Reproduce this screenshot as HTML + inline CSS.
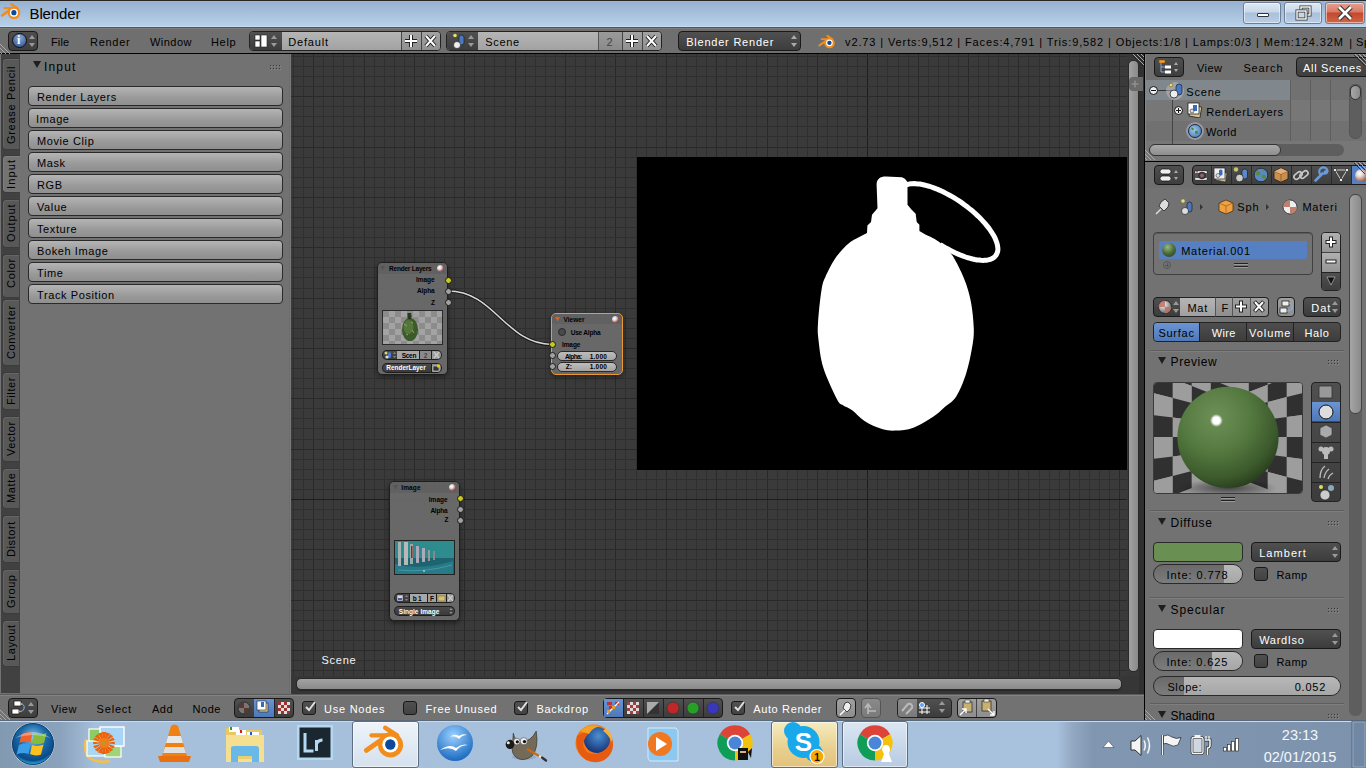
<!DOCTYPE html><html><head><meta charset="utf-8"><style>
*{margin:0;padding:0;box-sizing:border-box}
html,body{width:1366px;height:768px;overflow:hidden;background:#727272}
body{position:relative;font-family:"Liberation Sans",sans-serif;font-size:12px;color:#000}
.a{position:absolute}
.t{position:absolute;white-space:pre;line-height:1}
.btn{position:absolute;border:1px solid #191919;border-radius:4px;background:linear-gradient(#b0b0b0,#969696)}
.dk{position:absolute;border:1px solid #191919;border-radius:4px;background:linear-gradient(#505050,#3c3c3c)}
.chk{position:absolute;width:14px;height:14px;border:1px solid #191919;border-radius:3px;background:linear-gradient(#4c4c4c,#3e3e3e)}
</style></head><body>
<div class="a" style="left:0px;top:0px;width:1366px;height:1px;background:#2a2624"></div>
<div class="a" style="left:0px;top:1px;width:1366px;height:26px;background:linear-gradient(#9ab5d3,#98b3d1 6%,#b9d1ea)"></div>
<div class="a" style="left:0px;top:26px;width:1366px;height:1px;background:#c4dbf2"></div>
<div class="a" style="left:0px;top:27px;width:1366px;height:1px;background:#555"></div>
<div class="a" style="left:0px;top:28px;width:1366px;height:25px;background:#6f6f6f;border-top:1px solid #7c7c7c"></div>
<div class="a" style="left:0px;top:53px;width:1366px;height:1px;background:#000"></div>
<div class="a" style="left:0px;top:54px;width:291px;height:640px;background:#727272"></div>
<div class="a" style="left:1px;top:54px;width:19px;height:639px;background:#414141"></div>
<div class="a" style="left:289px;top:54px;width:1px;height:640px;background:#6b6b6b"></div>
<div class="a" style="left:290px;top:54px;width:1px;height:640px;background:#7b7b7b"></div>
<div class="a" style="left:291px;top:54px;width:853px;height:640px;background:#3a3a3a"></div>
<div class="a" style="left:1144px;top:54px;width:1px;height:666px;background:#000"></div>
<div class="a" style="left:1145px;top:54px;width:221px;height:107px;background:#727272"></div>
<div class="a" style="left:1145px;top:161px;width:221px;height:1px;background:#000"></div>
<div class="a" style="left:1145px;top:162px;width:221px;height:558px;background:#727272"></div>
<div class="a" style="left:0px;top:694px;width:1144px;height:1px;background:#5c5c5c"></div>
<div class="a" style="left:0px;top:695px;width:1144px;height:25px;background:#727272;border-top:1px solid #838383"></div>
<div class="a" style="left:0px;top:720px;width:1366px;height:48px;background:linear-gradient(90deg,#a8c3de 0,#a8c3de 1060px,#7f96b0 1095px,#7f96b0 100%)"></div>
<div class="a" style="left:0px;top:720px;width:1366px;height:1px;background:#dce8f4"></div>
<svg class="a" style="left:291px;top:54px" width="836" height="622" shape-rendering="crispEdges"><rect x="2" y="0" width="1" height="622" fill="#2f2f2f"/><rect x="12" y="0" width="1" height="622" fill="#2f2f2f"/><rect x="22" y="0" width="1" height="622" fill="#292929"/><rect x="32" y="0" width="1" height="622" fill="#2f2f2f"/><rect x="42" y="0" width="1" height="622" fill="#2f2f2f"/><rect x="52" y="0" width="1" height="622" fill="#2f2f2f"/><rect x="62" y="0" width="1" height="622" fill="#2f2f2f"/><rect x="73" y="0" width="1" height="622" fill="#292929"/><rect x="83" y="0" width="1" height="622" fill="#2f2f2f"/><rect x="93" y="0" width="1" height="622" fill="#2f2f2f"/><rect x="103" y="0" width="1" height="622" fill="#2f2f2f"/><rect x="113" y="0" width="1" height="622" fill="#2f2f2f"/><rect x="123" y="0" width="1" height="622" fill="#292929"/><rect x="133" y="0" width="1" height="622" fill="#2f2f2f"/><rect x="143" y="0" width="1" height="622" fill="#2f2f2f"/><rect x="153" y="0" width="1" height="622" fill="#2f2f2f"/><rect x="163" y="0" width="1" height="622" fill="#2f2f2f"/><rect x="173" y="0" width="1" height="622" fill="#292929"/><rect x="183" y="0" width="1" height="622" fill="#2f2f2f"/><rect x="193" y="0" width="1" height="622" fill="#2f2f2f"/><rect x="203" y="0" width="1" height="622" fill="#2f2f2f"/><rect x="214" y="0" width="1" height="622" fill="#2f2f2f"/><rect x="224" y="0" width="1" height="622" fill="#292929"/><rect x="234" y="0" width="1" height="622" fill="#2f2f2f"/><rect x="244" y="0" width="1" height="622" fill="#2f2f2f"/><rect x="254" y="0" width="1" height="622" fill="#2f2f2f"/><rect x="264" y="0" width="1" height="622" fill="#2f2f2f"/><rect x="274" y="0" width="1" height="622" fill="#292929"/><rect x="284" y="0" width="1" height="622" fill="#2f2f2f"/><rect x="294" y="0" width="1" height="622" fill="#2f2f2f"/><rect x="304" y="0" width="1" height="622" fill="#2f2f2f"/><rect x="314" y="0" width="1" height="622" fill="#2f2f2f"/><rect x="324" y="0" width="1" height="622" fill="#292929"/><rect x="334" y="0" width="1" height="622" fill="#2f2f2f"/><rect x="345" y="0" width="1" height="622" fill="#2f2f2f"/><rect x="355" y="0" width="1" height="622" fill="#2f2f2f"/><rect x="365" y="0" width="1" height="622" fill="#2f2f2f"/><rect x="375" y="0" width="1" height="622" fill="#292929"/><rect x="385" y="0" width="1" height="622" fill="#2f2f2f"/><rect x="395" y="0" width="1" height="622" fill="#2f2f2f"/><rect x="405" y="0" width="1" height="622" fill="#2f2f2f"/><rect x="415" y="0" width="1" height="622" fill="#2f2f2f"/><rect x="425" y="0" width="1" height="622" fill="#292929"/><rect x="435" y="0" width="1" height="622" fill="#2f2f2f"/><rect x="445" y="0" width="1" height="622" fill="#2f2f2f"/><rect x="455" y="0" width="1" height="622" fill="#2f2f2f"/><rect x="465" y="0" width="1" height="622" fill="#2f2f2f"/><rect x="476" y="0" width="1" height="622" fill="#292929"/><rect x="486" y="0" width="1" height="622" fill="#2f2f2f"/><rect x="496" y="0" width="1" height="622" fill="#2f2f2f"/><rect x="506" y="0" width="1" height="622" fill="#2f2f2f"/><rect x="516" y="0" width="1" height="622" fill="#2f2f2f"/><rect x="526" y="0" width="1" height="622" fill="#292929"/><rect x="536" y="0" width="1" height="622" fill="#2f2f2f"/><rect x="546" y="0" width="1" height="622" fill="#2f2f2f"/><rect x="556" y="0" width="1" height="622" fill="#2f2f2f"/><rect x="566" y="0" width="1" height="622" fill="#2f2f2f"/><rect x="576" y="0" width="1" height="622" fill="#1d1d1d"/><rect x="586" y="0" width="1" height="622" fill="#2f2f2f"/><rect x="596" y="0" width="1" height="622" fill="#2f2f2f"/><rect x="607" y="0" width="1" height="622" fill="#2f2f2f"/><rect x="617" y="0" width="1" height="622" fill="#2f2f2f"/><rect x="627" y="0" width="1" height="622" fill="#292929"/><rect x="637" y="0" width="1" height="622" fill="#2f2f2f"/><rect x="647" y="0" width="1" height="622" fill="#2f2f2f"/><rect x="657" y="0" width="1" height="622" fill="#2f2f2f"/><rect x="667" y="0" width="1" height="622" fill="#2f2f2f"/><rect x="677" y="0" width="1" height="622" fill="#292929"/><rect x="687" y="0" width="1" height="622" fill="#2f2f2f"/><rect x="697" y="0" width="1" height="622" fill="#2f2f2f"/><rect x="707" y="0" width="1" height="622" fill="#2f2f2f"/><rect x="717" y="0" width="1" height="622" fill="#2f2f2f"/><rect x="727" y="0" width="1" height="622" fill="#292929"/><rect x="737" y="0" width="1" height="622" fill="#2f2f2f"/><rect x="748" y="0" width="1" height="622" fill="#2f2f2f"/><rect x="758" y="0" width="1" height="622" fill="#2f2f2f"/><rect x="768" y="0" width="1" height="622" fill="#2f2f2f"/><rect x="778" y="0" width="1" height="622" fill="#292929"/><rect x="788" y="0" width="1" height="622" fill="#2f2f2f"/><rect x="798" y="0" width="1" height="622" fill="#2f2f2f"/><rect x="808" y="0" width="1" height="622" fill="#2f2f2f"/><rect x="818" y="0" width="1" height="622" fill="#2f2f2f"/><rect x="828" y="0" width="1" height="622" fill="#292929"/><rect x="0" y="2" width="836" height="1" fill="#2f2f2f"/><rect x="0" y="12" width="836" height="1" fill="#2f2f2f"/><rect x="0" y="22" width="836" height="1" fill="#2f2f2f"/><rect x="0" y="32" width="836" height="1" fill="#2f2f2f"/><rect x="0" y="42" width="836" height="1" fill="#292929"/><rect x="0" y="52" width="836" height="1" fill="#2f2f2f"/><rect x="0" y="62" width="836" height="1" fill="#2f2f2f"/><rect x="0" y="72" width="836" height="1" fill="#2f2f2f"/><rect x="0" y="82" width="836" height="1" fill="#2f2f2f"/><rect x="0" y="93" width="836" height="1" fill="#292929"/><rect x="0" y="103" width="836" height="1" fill="#2f2f2f"/><rect x="0" y="113" width="836" height="1" fill="#2f2f2f"/><rect x="0" y="123" width="836" height="1" fill="#2f2f2f"/><rect x="0" y="133" width="836" height="1" fill="#2f2f2f"/><rect x="0" y="143" width="836" height="1" fill="#292929"/><rect x="0" y="153" width="836" height="1" fill="#2f2f2f"/><rect x="0" y="163" width="836" height="1" fill="#2f2f2f"/><rect x="0" y="173" width="836" height="1" fill="#2f2f2f"/><rect x="0" y="183" width="836" height="1" fill="#2f2f2f"/><rect x="0" y="193" width="836" height="1" fill="#292929"/><rect x="0" y="203" width="836" height="1" fill="#2f2f2f"/><rect x="0" y="213" width="836" height="1" fill="#2f2f2f"/><rect x="0" y="223" width="836" height="1" fill="#2f2f2f"/><rect x="0" y="234" width="836" height="1" fill="#2f2f2f"/><rect x="0" y="244" width="836" height="1" fill="#292929"/><rect x="0" y="254" width="836" height="1" fill="#2f2f2f"/><rect x="0" y="264" width="836" height="1" fill="#2f2f2f"/><rect x="0" y="274" width="836" height="1" fill="#2f2f2f"/><rect x="0" y="284" width="836" height="1" fill="#2f2f2f"/><rect x="0" y="294" width="836" height="1" fill="#292929"/><rect x="0" y="304" width="836" height="1" fill="#2f2f2f"/><rect x="0" y="314" width="836" height="1" fill="#2f2f2f"/><rect x="0" y="324" width="836" height="1" fill="#2f2f2f"/><rect x="0" y="334" width="836" height="1" fill="#2f2f2f"/><rect x="0" y="344" width="836" height="1" fill="#292929"/><rect x="0" y="354" width="836" height="1" fill="#2f2f2f"/><rect x="0" y="364" width="836" height="1" fill="#2f2f2f"/><rect x="0" y="374" width="836" height="1" fill="#2f2f2f"/><rect x="0" y="385" width="836" height="1" fill="#2f2f2f"/><rect x="0" y="395" width="836" height="1" fill="#292929"/><rect x="0" y="405" width="836" height="1" fill="#2f2f2f"/><rect x="0" y="415" width="836" height="1" fill="#2f2f2f"/><rect x="0" y="425" width="836" height="1" fill="#2f2f2f"/><rect x="0" y="435" width="836" height="1" fill="#2f2f2f"/><rect x="0" y="445" width="836" height="1" fill="#1d1d1d"/><rect x="0" y="455" width="836" height="1" fill="#2f2f2f"/><rect x="0" y="465" width="836" height="1" fill="#2f2f2f"/><rect x="0" y="475" width="836" height="1" fill="#2f2f2f"/><rect x="0" y="485" width="836" height="1" fill="#2f2f2f"/><rect x="0" y="495" width="836" height="1" fill="#292929"/><rect x="0" y="505" width="836" height="1" fill="#2f2f2f"/><rect x="0" y="515" width="836" height="1" fill="#2f2f2f"/><rect x="0" y="526" width="836" height="1" fill="#2f2f2f"/><rect x="0" y="536" width="836" height="1" fill="#2f2f2f"/><rect x="0" y="546" width="836" height="1" fill="#292929"/><rect x="0" y="556" width="836" height="1" fill="#2f2f2f"/><rect x="0" y="566" width="836" height="1" fill="#2f2f2f"/><rect x="0" y="576" width="836" height="1" fill="#2f2f2f"/><rect x="0" y="586" width="836" height="1" fill="#2f2f2f"/><rect x="0" y="596" width="836" height="1" fill="#292929"/><rect x="0" y="606" width="836" height="1" fill="#2f2f2f"/><rect x="0" y="616" width="836" height="1" fill="#2f2f2f"/></svg>
<div class="a" style="left:637px;top:157px;width:490px;height:313px;background:#000"></div>
<svg class="a" style="left:0;top:0" width="1366" height="768"><g><path d="M944.0,245.7 C945.5,247.5 949.8,251.1 953.1,256.6 C956.4,262.1 961.0,271.0 964.0,278.5 C967.0,286.0 969.3,293.3 970.9,301.7 C972.5,310.1 973.6,321.2 973.8,329.0 C974.0,336.8 973.2,341.1 971.9,348.6 C970.6,356.1 968.6,366.0 966.0,374.0 C963.4,382.0 959.8,390.9 956.2,396.4 C952.7,401.9 948.4,403.8 944.5,407.2 C940.6,410.6 938.0,413.6 932.8,417.0 C927.6,420.4 919.5,425.4 913.3,427.7 C907.1,430.0 900.9,430.4 895.7,430.6 C890.5,430.8 887.2,430.6 882.0,429.0 C876.8,427.4 869.5,424.1 864.5,420.9 C859.5,417.7 855.4,412.6 851.8,410.0 C848.2,407.4 845.5,407.0 843.0,405.2 C840.5,403.4 840.4,405.6 837.1,399.4 C833.8,393.2 826.5,377.8 823.4,368.0 C820.3,358.2 819.5,348.3 818.6,340.8 C817.7,333.3 817.5,331.7 818.0,323.2 C818.5,314.7 820.2,297.8 821.5,290.0 C822.8,282.2 823.0,282.3 825.5,276.7 C828.0,271.1 832.5,262.2 836.5,256.6 C840.5,251.0 845.2,246.3 849.2,243.0 C853.2,239.7 858.4,237.7 860.2,236.6 L867,232.9 L867.4,225.6 L871,222 L872,214.7 L877.5,208.3 L876.6,184.6 C876.6,179 880,176.4 886,176.4 L902,177.3 Q905,178 907.5,181.9 L907.5,204.7 L911.2,209.2 L915.7,213.8 L916.7,222 L919.4,224.7 L919.4,231 L925.8,234.7 Q935,238 944,245.7 Z" fill="#fff"/><path d="M904.8,185.5 L906.1,184.9 L907.4,184.5 L908.9,184.1 L910.5,183.8 L912.2,183.7 L914.0,183.6 L915.9,183.7 L917.9,183.9 L920.0,184.1 L922.1,184.5 L924.4,185.0 L926.6,185.6 L929.0,186.2 L931.4,187.0 L933.8,187.9 L936.3,188.8 L938.8,189.9 L941.4,191.0 L944.0,192.3 L946.5,193.6 L949.1,195.0 L951.7,196.4 L954.3,197.9 L956.8,199.5 L959.4,201.2 L961.9,202.9 L964.3,204.7 L966.8,206.5 L969.1,208.4 L971.5,210.2 L973.7,212.2 L975.9,214.1 L978.0,216.1 L980.0,218.1 L982.0,220.1 L983.8,222.1 L985.6,224.1 L987.2,226.1 L988.8,228.1 L990.2,230.1 L991.5,232.0 L992.7,234.0 L993.8,235.8 L994.8,237.7 L995.6,239.5 L996.3,241.3 L996.9,243.0 L997.3,244.6 L997.6,246.2 L997.8,247.7 L997.9,249.2 L997.8,250.6 L997.5,251.9 L997.1,253.1 L996.6,254.2 L996.0,255.3 L995.2,256.2 L994.4,257.1 L993.3,257.8 L992.2,258.5 L990.9,259.1 L989.6,259.5 L988.1,259.9 L986.5,260.2 L984.8,260.3 L983.0,260.4 L981.1,260.3 L979.1,260.1 L977.0,259.9 L974.9,259.5 L972.6,259.0 L970.4,258.4 L968.0,257.8 L965.6,257.0 L963.2,256.1 L960.7,255.2 L958.2,254.1 L955.6,253.0 L953.0,251.7 L950.5,250.4 L947.9,249.0 L945.3,247.6 L942.7,246.1 L940.2,244.5" fill="none" stroke="#fff" stroke-width="5"/></g></svg>
<div class="a" style="left:1127px;top:54px;width:17px;height:640px;background:#383838"></div>
<div class="a" style="left:291px;top:676px;width:853px;height:18px;background:#363636"></div>
<div class="a" style="left:1139px;top:54px;width:5px;height:640px;background:#303030"></div>
<div class="a" style="left:1128px;top:60px;width:11px;height:612px;border-radius:5px;background:linear-gradient(90deg,#a2a2a2,#8a8a8a);border:1px solid #2a2a2a"></div>
<div class="a" style="left:1129px;top:77px;width:14px;height:14px;background:#6a6a6a;border-radius:4px 0 0 4px"></div>
<svg class="a" style="left:1131px;top:80px" width="8" height="8"><path d="M4,0.5 V7.5 M0.5,4 H7.5" stroke="#8e8e8e" stroke-width="1.6"/></svg>
<div class="a" style="left:296px;top:678px;width:826px;height:12px;border-radius:5px;background:linear-gradient(#a2a2a2,#8a8a8a);border:1px solid #2a2a2a;box-shadow:0 1px 1px rgba(0,0,0,0.3)"></div>
<div class="t" style="left:321.50px;top:654.69px;font-size:11px;letter-spacing:0.732px;color:#f4f4f4">Scene</div>
<svg class="a" style="left:0;top:0" width="1366" height="768"><path d="M448,291 C495,291 505,344 552,344.5" fill="none" stroke="#1a1a1a" stroke-width="3.4"/><path d="M448,291 C495,291 505,344 552,344.5" fill="none" stroke="#d8d8d8" stroke-width="1.5"/></svg>
<div class="a" style="left:377px;top:262px;width:71px;height:113px;border-radius:5px;background:rgba(108,108,108,0.92);border:1px solid #1e1e1e;box-shadow:0 2px 5px rgba(0,0,0,0.45)"></div>
<div class="a" style="left:378px;top:263px;width:69px;height:11px;border-radius:4px 4px 0 0;background:rgba(90,90,90,0.5)"></div>
<svg class="a" style="left:380px;top:266px" width="6" height="5"><path d="M0,0 L5,0 L2.5,4.5Z" fill="#555"/></svg>
<div class="t" style="left:389.00px;top:265.80px;font-size:6.5px;letter-spacing:-0.212px;font-weight:bold;color:#000">Render Layers</div>
<div class="a" style="left:436.5px;top:264.5px;width:7.0px;height:7.0px;border-radius:50%;background:radial-gradient(circle at 35% 35%,#fff 0,#ddd 30%,#a06060 60%,#333 100%)"></div>
<div class="t" style="left:415.90px;top:276.80px;font-size:6.5px;letter-spacing:0.007px;font-weight:bold;color:#000">Image</div>
<div class="t" style="left:417.00px;top:288.20px;font-size:6.5px;letter-spacing:-0.110px;font-weight:bold;color:#000">Alpha</div>
<div class="t" style="left:431.00px;top:299.50px;font-size:6.5px;letter-spacing:0.000px;font-weight:bold;color:#000">Z</div>
<div class="a" style="left:444.5px;top:276.5px;width:7px;height:7px;border-radius:50%;background:#c7c729;border:1px solid #1a1a1a"></div>
<div class="a" style="left:444.5px;top:287.5px;width:7px;height:7px;border-radius:50%;background:#a1a1a1;border:1px solid #1a1a1a"></div>
<div class="a" style="left:444.5px;top:298.5px;width:7px;height:7px;border-radius:50%;background:#a1a1a1;border:1px solid #1a1a1a"></div>
<div class="a" style="left:382px;top:310px;width:61px;height:35px;border:1px solid #2a2a2a;background-color:#8c8c8c;background-image:linear-gradient(45deg,#a3a3a3 25%,transparent 25%,transparent 75%,#a3a3a3 75%),linear-gradient(45deg,#a3a3a3 25%,transparent 25%,transparent 75%,#a3a3a3 75%);background-size:12px 12px;background-position:0 0,6px 6px"></div>
<svg class="a" style="left:382px;top:310px" width="61" height="35"><ellipse cx="28" cy="19.5" rx="8" ry="11.5" fill="#3c5a2a"/><ellipse cx="26.5" cy="17" rx="5" ry="7" fill="#5a7d40" opacity="0.8"/><path d="M22,14 l3,2 M30,20 l2,3 M24,24 l2,1 M29,12 l2,1" stroke="#9ab870" stroke-width="0.8"/><rect x="25.5" y="3" width="4" height="6" fill="#2a3a22"/><path d="M29,4 Q37,4 37,11" stroke="#999" stroke-width="1" fill="none"/></svg>
<div class="a" style="left:382px;top:350px;width:60px;height:10px;background:#1e1e1e;border-radius:5px"></div>
<div class="a" style="left:383px;top:351px;width:14px;height:8px;background:linear-gradient(#4a4a4a,#3a3a3a);border-radius:4px 0 0 4px"></div>
<div class="a" style="left:397px;top:351px;width:22px;height:8px;background:#a8a8a8;border-radius:0"></div>
<div class="a" style="left:420px;top:351px;width:11px;height:8px;background:#8a8a8a;border-radius:0"></div>
<div class="a" style="left:432px;top:351px;width:9px;height:8px;background:#9a9a9a;border-radius:0 4px 4px 0"></div>
<svg class="a" style="left:383px;top:351px" width="14" height="8"><circle cx="3" cy="2" r="1.5" fill="#d8d870"/><rect x="5" y="1" width="3" height="6" rx="1.5" fill="#4a7ad0"/><circle cx="4" cy="6" r="1.6" fill="#ddd"/><path d="M10,3 L11.5,1 L13,3Z M10,5 L11.5,7 L13,5Z" fill="#888"/></svg>
<svg class="a" style="left:432px;top:351px" width="9" height="8"><path d="M2,1 L7,7 M7,1 L2,7" stroke="#ccc" stroke-width="1.3"/></svg>
<div class="t" style="left:401.70px;top:352.90px;font-size:6.5px;letter-spacing:-0.288px;font-weight:bold;color:#000">Scen</div>
<div class="t" style="left:423.70px;top:352.90px;font-size:6.5px;letter-spacing:0.000px;font-weight:bold;color:#444">2</div>
<div class="a" style="left:382px;top:363px;width:60px;height:10px;background:#1e1e1e;border-radius:5px"></div>
<div class="a" style="left:383px;top:364px;width:48px;height:8px;background:linear-gradient(#4a4a4a,#3a3a3a);border-radius:4px 0 0 4px"></div>
<div class="a" style="left:432px;top:364px;width:9px;height:8px;background:#8a8a8a;border-radius:0 4px 4px 0"></div>
<svg class="a" style="left:432px;top:364px" width="9" height="8"><rect x="1" y="2" width="6" height="5" fill="#333" stroke="#ddd" stroke-width="0.6"/><circle cx="6.5" cy="2" r="1.8" fill="#e8c820"/></svg>
<div class="t" style="left:386.30px;top:365.40px;font-size:6.5px;letter-spacing:-0.031px;font-weight:bold;color:#fff">RenderLayer</div>
<div class="a" style="left:551px;top:313px;width:72px;height:62px;border-radius:5px;background:rgba(108,108,108,0.92);border:1px solid #ea9a30;box-shadow:0 2px 5px rgba(0,0,0,0.45)"></div>
<div class="a" style="left:552px;top:314px;width:70px;height:10px;border-radius:4px 4px 0 0;background:rgba(90,90,90,0.5)"></div>
<svg class="a" style="left:555px;top:317px" width="6" height="5"><path d="M0,0 L5,0 L2.5,4.5Z" fill="#e06020"/></svg>
<div class="t" style="left:563.40px;top:317.40px;font-size:6.5px;letter-spacing:0.058px;font-weight:bold;color:#000">Viewer</div>
<div class="a" style="left:611.5px;top:315.5px;width:7.0px;height:7.0px;border-radius:50%;background:radial-gradient(circle at 35% 35%,#fff 0,#ddd 30%,#a06060 60%,#333 100%)"></div>
<div class="a" style="left:558px;top:328px;width:8px;height:8px;border-radius:50%;background:#4a4a4a;border:1px solid #2a2a2a"></div>
<div class="t" style="left:570.70px;top:329.50px;font-size:6.5px;letter-spacing:-0.209px;font-weight:bold;color:#000">Use Alpha</div>
<div class="t" style="left:561.90px;top:342.40px;font-size:6.5px;letter-spacing:-0.068px;font-weight:bold;color:#000">Image</div>
<div class="a" style="left:548.5px;top:341.0px;width:7px;height:7px;border-radius:50%;background:#c7c729;border:1px solid #1a1a1a"></div>
<div class="a" style="left:557px;top:351px;width:60px;height:10px;border-radius:5px;background:linear-gradient(#bdbdbd,#a4a4a4);border:1px solid #2a2a2a"></div>
<div class="a" style="left:557px;top:362px;width:60px;height:10px;border-radius:5px;background:linear-gradient(#bdbdbd,#a4a4a4);border:1px solid #2a2a2a"></div>
<div class="t" style="left:565.00px;top:353.50px;font-size:6.5px;letter-spacing:-0.611px;font-weight:bold;color:#000">Alpha:</div>
<div class="t" style="left:589.80px;top:353.50px;font-size:6.5px;letter-spacing:0.187px;font-weight:bold;color:#000">1.000</div>
<div class="t" style="left:565.80px;top:364.30px;font-size:6.5px;letter-spacing:0.030px;font-weight:bold;color:#000">Z:</div>
<div class="t" style="left:589.80px;top:364.30px;font-size:6.5px;letter-spacing:0.187px;font-weight:bold;color:#000">1.000</div>
<div class="a" style="left:548.5px;top:352.0px;width:7px;height:7px;border-radius:50%;background:#a1a1a1;border:1px solid #1a1a1a"></div>
<div class="a" style="left:548.5px;top:363.0px;width:7px;height:7px;border-radius:50%;background:#a1a1a1;border:1px solid #1a1a1a"></div>
<div class="a" style="left:389px;top:481px;width:71px;height:140px;border-radius:5px;background:rgba(108,108,108,0.92);border:1px solid #1e1e1e;box-shadow:0 2px 5px rgba(0,0,0,0.45)"></div>
<div class="a" style="left:390px;top:482px;width:69px;height:11px;border-radius:4px 4px 0 0;background:rgba(90,90,90,0.5)"></div>
<svg class="a" style="left:393px;top:485px" width="6" height="5"><path d="M0,0 L5,0 L2.5,4.5Z" fill="#555"/></svg>
<div class="t" style="left:401.25px;top:484.70px;font-size:6.5px;letter-spacing:0.132px;font-weight:bold;color:#000">Image</div>
<div class="a" style="left:448.5px;top:483.5px;width:7.0px;height:7.0px;border-radius:50%;background:radial-gradient(circle at 35% 35%,#fff 0,#ddd 30%,#a06060 60%,#333 100%)"></div>
<div class="t" style="left:428.75px;top:496.80px;font-size:6.5px;letter-spacing:0.032px;font-weight:bold;color:#000">Image</div>
<div class="t" style="left:430.40px;top:507.60px;font-size:6.5px;letter-spacing:-0.210px;font-weight:bold;color:#000">Alpha</div>
<div class="t" style="left:444.50px;top:516.50px;font-size:6.5px;letter-spacing:0.000px;font-weight:bold;color:#000">Z</div>
<div class="a" style="left:456.5px;top:495.0px;width:7px;height:7px;border-radius:50%;background:#c7c729;border:1px solid #1a1a1a"></div>
<div class="a" style="left:456.5px;top:505.5px;width:7px;height:7px;border-radius:50%;background:#a1a1a1;border:1px solid #1a1a1a"></div>
<div class="a" style="left:456.5px;top:516.5px;width:7px;height:7px;border-radius:50%;background:#a1a1a1;border:1px solid #1a1a1a"></div>
<svg class="a" style="left:394px;top:540px" width="61" height="35"><rect x="0" y="0" width="61" height="35" fill="#1f2a2a"/><rect x="1" y="1" width="59" height="17" fill="#2f8c8e"/><rect x="1" y="18" width="59" height="16" fill="#1d6470"/><path d="M1,24 Q25,31 59,21 L59,34 L1,34Z" fill="#277a86"/><path d="M4,30 Q30,33 58,25" stroke="#4aa0b0" stroke-width="0.8" fill="none"/><rect x="4" y="2" width="3" height="24" fill="#a8b0b0"/><rect x="10" y="2" width="4" height="23" fill="#b8b8b8"/><rect x="16" y="4" width="3" height="20" fill="#9aa"/><rect x="17" y="6" width="1.5" height="12" fill="#a02020"/><rect x="22" y="6" width="3" height="17" fill="#aab"/><rect x="28" y="8" width="3" height="14" fill="#aab"/><rect x="34" y="10" width="2" height="11" fill="#999"/><rect x="39" y="11" width="2" height="9" fill="#888"/><circle cx="30" cy="31" r="0.8" fill="#fff"/></svg>
<div class="a" style="left:394px;top:540px;width:61px;height:35px;border:1px solid #222"></div>
<div class="a" style="left:394px;top:593px;width:61px;height:10px;background:#1e1e1e;border-radius:5px"></div>
<div class="a" style="left:395px;top:594px;width:14px;height:8px;background:linear-gradient(#4a4a4a,#3a3a3a);border-radius:4px 0 0 4px"></div>
<div class="a" style="left:410px;top:594px;width:17px;height:8px;background:#a8a8a8;border-radius:0"></div>
<div class="a" style="left:428px;top:594px;width:8px;height:8px;background:#a0a0a0;border-radius:0"></div>
<div class="a" style="left:437px;top:594px;width:9px;height:8px;background:#a8a890;border-radius:0"></div>
<div class="a" style="left:447px;top:594px;width:7px;height:8px;background:#9a9a9a;border-radius:0 4px 4px 0"></div>
<svg class="a" style="left:395px;top:594px" width="14" height="8"><rect x="2" y="1" width="6" height="6" fill="#e0d0d8" stroke="#333" stroke-width="0.5"/><rect x="3" y="4" width="4" height="2" fill="#3060c0"/><path d="M10,3 L11.5,1 L13,3Z M10,5 L11.5,7 L13,5Z" fill="#888"/></svg>
<svg class="a" style="left:437px;top:594px" width="18" height="8"><rect x="1" y="2" width="7" height="5" fill="#d8c070" stroke="#555" stroke-width="0.5"/><path d="M11,1 L16,7 M16,1 L11,7" stroke="#ccc" stroke-width="1.2"/></svg>
<div class="t" style="left:412.70px;top:596.20px;font-size:6.5px;letter-spacing:-0.238px;font-weight:bold;color:#000">b 1</div>
<div class="t" style="left:430.00px;top:596.20px;font-size:6.5px;letter-spacing:0.000px;font-weight:bold;color:#000">F</div>
<div class="a" style="left:394px;top:606px;width:61px;height:10px;background:#1e1e1e;border-radius:5px"></div>
<div class="a" style="left:395px;top:607px;width:59px;height:8px;background:linear-gradient(#4a4a4a,#3a3a3a);border-radius:4px"></div>
<svg class="a" style="left:449px;top:607px" width="5" height="8"><path d="M0.5,3 L2,1 L3.5,3Z M0.5,5 L2,7 L3.5,5Z" fill="#999"/></svg>
<div class="t" style="left:398.75px;top:608.90px;font-size:6.5px;letter-spacing:0.047px;font-weight:bold;color:#fff">Single Image</div>
<div class="a" style="left:2px;top:58px;width:17px;height:92px;border-radius:4px 0 0 4px;background:#585858;border:1px solid #3c3c3c;border-right:none;box-shadow:inset 1px 1px 0 rgba(255,255,255,0.08)"></div>
<div class="t" style="left:6.29px;top:143.75px;transform-origin:0 0;transform:rotate(-90deg);font-size:11px;letter-spacing:0.696px;">Grease Pencil</div>
<div class="a" style="left:2px;top:155px;width:18px;height:38px;border-radius:4px 0 0 4px;background:#737373;border:1px solid #3c3c3c;border-right:none;box-shadow:inset 1px 1px 0 rgba(255,255,255,0.08)"></div>
<div class="t" style="left:6.29px;top:189.00px;transform-origin:0 0;transform:rotate(-90deg);font-size:11px;letter-spacing:1.148px;">Input</div>
<div class="a" style="left:2px;top:199px;width:17px;height:49px;border-radius:4px 0 0 4px;background:#585858;border:1px solid #3c3c3c;border-right:none;box-shadow:inset 1px 1px 0 rgba(255,255,255,0.08)"></div>
<div class="t" style="left:6.29px;top:242.00px;transform-origin:0 0;transform:rotate(-90deg);font-size:11px;letter-spacing:0.907px;">Output</div>
<div class="a" style="left:2px;top:254px;width:17px;height:44px;border-radius:4px 0 0 4px;background:#585858;border:1px solid #3c3c3c;border-right:none;box-shadow:inset 1px 1px 0 rgba(255,255,255,0.08)"></div>
<div class="t" style="left:6.29px;top:288.30px;transform-origin:0 0;transform:rotate(-90deg);font-size:11px;letter-spacing:0.744px;">Color</div>
<div class="a" style="left:2px;top:299px;width:17px;height:67px;border-radius:4px 0 0 4px;background:#585858;border:1px solid #3c3c3c;border-right:none;box-shadow:inset 1px 1px 0 rgba(255,255,255,0.08)"></div>
<div class="t" style="left:6.29px;top:359.22px;transform-origin:0 0;transform:rotate(-90deg);font-size:11px;letter-spacing:0.600px;">Converter</div>
<div class="a" style="left:2px;top:372px;width:17px;height:38px;border-radius:4px 0 0 4px;background:#585858;border:1px solid #3c3c3c;border-right:none;box-shadow:inset 1px 1px 0 rgba(255,255,255,0.08)"></div>
<div class="t" style="left:6.29px;top:404.89px;transform-origin:0 0;transform:rotate(-90deg);font-size:11px;letter-spacing:0.600px;">Filter</div>
<div class="a" style="left:2px;top:416px;width:17px;height:46px;border-radius:4px 0 0 4px;background:#585858;border:1px solid #3c3c3c;border-right:none;box-shadow:inset 1px 1px 0 rgba(255,255,255,0.08)"></div>
<div class="t" style="left:6.29px;top:456.26px;transform-origin:0 0;transform:rotate(-90deg);font-size:11px;letter-spacing:0.600px;">Vector</div>
<div class="a" style="left:2px;top:468px;width:17px;height:41px;border-radius:4px 0 0 4px;background:#585858;border:1px solid #3c3c3c;border-right:none;box-shadow:inset 1px 1px 0 rgba(255,255,255,0.08)"></div>
<div class="t" style="left:6.29px;top:503.40px;transform-origin:0 0;transform:rotate(-90deg);font-size:11px;letter-spacing:0.600px;">Matte</div>
<div class="a" style="left:2px;top:515px;width:17px;height:48px;border-radius:4px 0 0 4px;background:#585858;border:1px solid #3c3c3c;border-right:none;box-shadow:inset 1px 1px 0 rgba(255,255,255,0.08)"></div>
<div class="t" style="left:6.29px;top:556.66px;transform-origin:0 0;transform:rotate(-90deg);font-size:11px;letter-spacing:0.600px;">Distort</div>
<div class="a" style="left:2px;top:569px;width:17px;height:45px;border-radius:4px 0 0 4px;background:#585858;border:1px solid #3c3c3c;border-right:none;box-shadow:inset 1px 1px 0 rgba(255,255,255,0.08)"></div>
<div class="t" style="left:6.29px;top:607.93px;transform-origin:0 0;transform:rotate(-90deg);font-size:11px;letter-spacing:0.600px;">Group</div>
<div class="a" style="left:2px;top:620px;width:17px;height:47px;border-radius:4px 0 0 4px;background:#585858;border:1px solid #3c3c3c;border-right:none;box-shadow:inset 1px 1px 0 rgba(255,255,255,0.08)"></div>
<div class="t" style="left:6.29px;top:661.49px;transform-origin:0 0;transform:rotate(-90deg);font-size:11px;letter-spacing:0.600px;">Layout</div>
<svg class="a" style="left:33px;top:61px" width="9" height="8"><path d="M0,0 L8,0 L4,7Z" fill="#1e1e1e"/></svg>
<div class="t" style="left:44.00px;top:60.84px;font-size:12px;letter-spacing:1.161px;">Input</div>
<svg class="a" style="left:270px;top:65px" width="12" height="6" shape-rendering="crispEdges"><rect x="0" y="0" width="1" height="1" fill="#3a3a3a"/><rect x="1" y="1" width="1" height="1" fill="#8a8a8a"/><rect x="3" y="0" width="1" height="1" fill="#3a3a3a"/><rect x="4" y="1" width="1" height="1" fill="#8a8a8a"/><rect x="6" y="0" width="1" height="1" fill="#3a3a3a"/><rect x="7" y="1" width="1" height="1" fill="#8a8a8a"/><rect x="9" y="0" width="1" height="1" fill="#3a3a3a"/><rect x="10" y="1" width="1" height="1" fill="#8a8a8a"/><rect x="0" y="3" width="1" height="1" fill="#3a3a3a"/><rect x="1" y="4" width="1" height="1" fill="#8a8a8a"/><rect x="3" y="3" width="1" height="1" fill="#3a3a3a"/><rect x="4" y="4" width="1" height="1" fill="#8a8a8a"/><rect x="6" y="3" width="1" height="1" fill="#3a3a3a"/><rect x="7" y="4" width="1" height="1" fill="#8a8a8a"/><rect x="9" y="3" width="1" height="1" fill="#3a3a3a"/><rect x="10" y="4" width="1" height="1" fill="#8a8a8a"/></svg>
<div class="btn" style="left:28px;top:86px;width:255px;height:20px;border-color:#2a2a2a;background:linear-gradient(#b4b4b4,#999 60%,#8f8f8f)"></div>
<div class="t" style="left:37.00px;top:91.69px;font-size:11px;letter-spacing:0.600px;">Render Layers</div>
<div class="btn" style="left:28px;top:108px;width:255px;height:20px;border-color:#2a2a2a;background:linear-gradient(#b4b4b4,#999 60%,#8f8f8f)"></div>
<div class="t" style="left:36.00px;top:113.69px;font-size:11px;letter-spacing:0.600px;">Image</div>
<div class="btn" style="left:28px;top:130px;width:255px;height:20px;border-color:#2a2a2a;background:linear-gradient(#b4b4b4,#999 60%,#8f8f8f)"></div>
<div class="t" style="left:37.00px;top:135.69px;font-size:11px;letter-spacing:0.600px;">Movie Clip</div>
<div class="btn" style="left:28px;top:152px;width:255px;height:20px;border-color:#2a2a2a;background:linear-gradient(#b4b4b4,#999 60%,#8f8f8f)"></div>
<div class="t" style="left:37.00px;top:157.69px;font-size:11px;letter-spacing:0.600px;">Mask</div>
<div class="btn" style="left:28px;top:174px;width:255px;height:20px;border-color:#2a2a2a;background:linear-gradient(#b4b4b4,#999 60%,#8f8f8f)"></div>
<div class="t" style="left:37.00px;top:179.69px;font-size:11px;letter-spacing:0.600px;">RGB</div>
<div class="btn" style="left:28px;top:196px;width:255px;height:20px;border-color:#2a2a2a;background:linear-gradient(#b4b4b4,#999 60%,#8f8f8f)"></div>
<div class="t" style="left:37.00px;top:201.69px;font-size:11px;letter-spacing:0.600px;">Value</div>
<div class="btn" style="left:28px;top:218px;width:255px;height:20px;border-color:#2a2a2a;background:linear-gradient(#b4b4b4,#999 60%,#8f8f8f)"></div>
<div class="t" style="left:37.00px;top:223.69px;font-size:11px;letter-spacing:0.600px;">Texture</div>
<div class="btn" style="left:28px;top:240px;width:255px;height:20px;border-color:#2a2a2a;background:linear-gradient(#b4b4b4,#999 60%,#8f8f8f)"></div>
<div class="t" style="left:37.00px;top:245.69px;font-size:11px;letter-spacing:0.600px;">Bokeh Image</div>
<div class="btn" style="left:28px;top:262px;width:255px;height:20px;border-color:#2a2a2a;background:linear-gradient(#b4b4b4,#999 60%,#8f8f8f)"></div>
<div class="t" style="left:37.00px;top:267.69px;font-size:11px;letter-spacing:0.600px;">Time</div>
<div class="btn" style="left:28px;top:284px;width:255px;height:20px;border-color:#2a2a2a;background:linear-gradient(#b4b4b4,#999 60%,#8f8f8f)"></div>
<div class="t" style="left:37.00px;top:289.69px;font-size:11px;letter-spacing:0.600px;">Track Position</div>
<div class="a" style="left:1145px;top:54px;width:221px;height:26px;background:#6f6f6f"></div>
<div class="dk" style="left:1154px;top:57px;width:30px;height:20px;background:linear-gradient(#4e4e4e,#3e3e3e)"></div>
<svg class="a" style="left:1157px;top:59px" width="24" height="16"><rect x="2" y="1" width="6" height="3" fill="#f0a030" stroke="#804000" stroke-width="0.5"/><path d="M4,4 V13 M4,8 H8 M4,13 H8" stroke="#8aa8d8" stroke-width="1" fill="none"/><rect x="8" y="6.5" width="6" height="3" fill="#fff"/><rect x="8" y="11.5" width="6" height="3" fill="#fff"/><path d="M17,6 L19,3 L21,6Z M17,10 L19,13 L21,10Z" fill="#aaa"/></svg>
<div class="t" style="left:1197.00px;top:62.69px;font-size:11px;letter-spacing:0.433px;">View</div>
<div class="t" style="left:1243.40px;top:62.69px;font-size:11px;letter-spacing:0.853px;">Search</div>
<div class="dk" style="left:1296px;top:57px;width:80px;height:20px;background:linear-gradient(#4e4e4e,#3e3e3e)"></div>
<div class="t" style="left:1303.00px;top:62.69px;font-size:11px;letter-spacing:0.692px;color:#fff">All Scenes</div>
<div class="a" style="left:1145px;top:80px;width:221px;height:20px;background:#717171"></div>
<div class="a" style="left:1145px;top:80px;width:145px;height:20px;background:#80878d"></div>
<div class="a" style="left:1145px;top:100px;width:221px;height:21px;background:#777777"></div>
<div class="a" style="left:1145px;top:121px;width:221px;height:20px;background:#717171"></div>
<div class="a" style="left:1145px;top:141px;width:221px;height:20px;background:#777777"></div>
<div class="a" style="left:1145px;top:54px;width:1px;height:107px;background:#858585"></div>
<div class="a" style="left:1290px;top:80px;width:1px;height:61px;background:#5e5e5e"></div>
<div class="a" style="left:1310px;top:80px;width:1px;height:61px;background:#5e5e5e"></div>
<div class="a" style="left:1330px;top:80px;width:1px;height:61px;background:#5e5e5e"></div>
<div class="a" style="left:1158px;top:90px;width:14px;height:1px;background:#333"></div>
<div class="a" style="left:1172px;top:100px;width:1px;height:44px;background:#444"></div>
<div class="a" style="left:1149px;top:86px;width:9px;height:9px;border-radius:50%;background:#eee;border:1px solid #111"></div>
<div class="a" style="left:1151px;top:90px;width:5px;height:1px;background:#111"></div>
<div class="a" style="left:1166px;top:82px;width:18px;height:18px;border-radius:50%;background:rgba(200,200,200,0.45)"></div>
<svg class="a" style="left:1167px;top:82px" width="20" height="18"><circle cx="4" cy="3" r="1.8" fill="#e8e070" stroke="#806020" stroke-width="0.6"/><rect x="9" y="2" width="6" height="11" rx="3" fill="#4a78c0" stroke="#1a2a50" stroke-width="0.8"/><circle cx="7" cy="12" r="4" fill="#eee" stroke="#222" stroke-width="0.8"/></svg>
<div class="t" style="left:1186.30px;top:86.69px;font-size:11px;letter-spacing:0.807px;">Scene</div>
<div class="a" style="left:1174px;top:106px;width:9px;height:9px;border-radius:50%;background:#eee;border:1px solid #111"></div>
<div class="a" style="left:1176px;top:110px;width:5px;height:1px;background:#111"></div>
<div class="a" style="left:1178px;top:108px;width:1px;height:5px;background:#111"></div>
<svg class="a" style="left:1187px;top:102px" width="16" height="16"><rect x="3" y="4" width="11" height="11" fill="#d8c898" stroke="#222" stroke-width="0.8" transform="rotate(10 8 9)"/><rect x="1" y="1" width="11" height="11" fill="#fff" stroke="#222" stroke-width="0.8"/><rect x="6" y="3" width="4" height="6" fill="#3a6ac0"/><circle cx="5" cy="9" r="2" fill="#ddd" stroke="#222" stroke-width="0.6"/></svg>
<div class="t" style="left:1206.20px;top:106.69px;font-size:11px;letter-spacing:0.710px;">RenderLayers</div>
<div class="a" style="left:1186px;top:122px;width:18px;height:18px;border-radius:50%;background:rgba(190,190,220,0.5)"></div>
<div class="a" style="left:1188px;top:124px;width:14px;height:14px;border-radius:50%;background:radial-gradient(circle at 40% 40%,#9ec8e8,#3a70a8);border:1px solid #1a2a40"></div>
<svg class="a" style="left:1189px;top:125px" width="12" height="12"><path d="M2,3 Q4,2 5,4 Q4,6 3,5Z M6,6 Q9,5 9,8 Q7,10 6,8Z" fill="#4a8a3a"/></svg>
<div class="t" style="left:1205.90px;top:126.69px;font-size:11px;letter-spacing:0.498px;">World</div>
<div class="a" style="left:1349px;top:84px;width:13px;height:55px;border-radius:6px;background:#5e5e5e;border:1px solid #555"></div>
<div class="a" style="left:1350px;top:85px;width:11px;height:15px;border-radius:6px;background:linear-gradient(90deg,#a8a8a8,#8a8a8a);border:1px solid #333"></div>
<div class="a" style="left:1149px;top:144px;width:195px;height:12px;border-radius:6px;background:#5e5e5e"></div>
<div class="a" style="left:1149px;top:144px;width:132px;height:12px;border-radius:6px;background:linear-gradient(#aaa,#8e8e8e);border:1px solid #333"></div>
<div class="a" style="left:1145px;top:162px;width:221px;height:26px;background:#6f6f6f"></div>
<div class="dk" style="left:1154px;top:165px;width:30px;height:20px;background:linear-gradient(#4e4e4e,#3e3e3e)"></div>
<svg class="a" style="left:1157px;top:168px" width="24" height="15"><rect x="3" y="1" width="11" height="5" rx="2.5" fill="#eee" stroke="#111" stroke-width="0.7"/><rect x="3" y="8" width="11" height="5" rx="2.5" fill="#eee" stroke="#111" stroke-width="0.7"/><path d="M17,5 L19,2 L21,5Z M17,9 L19,12 L21,9Z" fill="#aaa"/></svg>
<div class="dk" style="left:1192px;top:165px;width:180px;height:20px;background:linear-gradient(#4e4e4e,#3e3e3e)"></div>
<div class="a" style="left:1211px;top:166px;width:1px;height:18px;background:#2a2a2a"></div>
<div class="a" style="left:1231px;top:166px;width:1px;height:18px;background:#2a2a2a"></div>
<div class="a" style="left:1251px;top:166px;width:1px;height:18px;background:#2a2a2a"></div>
<div class="a" style="left:1271px;top:166px;width:1px;height:18px;background:#2a2a2a"></div>
<div class="a" style="left:1291px;top:166px;width:1px;height:18px;background:#2a2a2a"></div>
<div class="a" style="left:1311px;top:166px;width:1px;height:18px;background:#2a2a2a"></div>
<div class="a" style="left:1331px;top:166px;width:1px;height:18px;background:#2a2a2a"></div>
<div class="a" style="left:1351px;top:166px;width:1px;height:18px;background:#2a2a2a"></div>
<div class="a" style="left:1352px;top:166px;width:14px;height:18px;background:#5680c2"></div>
<div class="a" style="left:1351px;top:166px;width:1px;height:18px;background:#2a2a2a"></div>
<svg class="a" style="left:1191px;top:165px" width="170" height="20"><g transform="translate(0,0)"><rect x="3.5" y="5.5" width="13" height="10" rx="1.5" fill="#d8d8d8" stroke="#222" stroke-width="0.8"/><rect x="3.5" y="8" width="13" height="5" fill="#555"/><circle cx="11" cy="10.5" r="3.4" fill="#444" stroke="#111" stroke-width="0.6"/><circle cx="11" cy="10.5" r="1.8" fill="#a06060"/><circle cx="6" cy="6.5" r="0.9" fill="#d03030"/></g><g transform="translate(20,0)"><path d="M6,6 L16,8 L14.5,17 L4.5,15Z" fill="#d8c898" stroke="#222" stroke-width="0.6"/><rect x="3" y="3" width="11" height="11" fill="#eee" stroke="#222" stroke-width="0.7"/><rect x="8" y="4.5" width="3.5" height="6" rx="1.5" fill="#3a6ac0"/><circle cx="7" cy="10.5" r="2" fill="#ddd" stroke="#222" stroke-width="0.5"/></g><g transform="translate(40,0)"><circle cx="5" cy="4.5" r="2.2" fill="#e8e070" opacity="0.8"/><rect x="11" y="4" width="5.5" height="10" rx="2.7" fill="#5a88c8" stroke="#111" stroke-width="0.6"/><circle cx="8.5" cy="13" r="3.8" fill="#ccc" stroke="#111" stroke-width="0.6"/></g><g transform="translate(60,0)"><circle cx="10" cy="10" r="6.8" fill="#5a8ac0" stroke="#223" stroke-width="0.8"/><path d="M5.5,6.5 Q9,5 9.5,9 Q7.5,11.5 5,9.5Z M11,10 Q15.5,9 15,13 Q12.5,15.5 11,12Z M11,5 Q13,4.5 14,6.5 Q12,7 11,5Z" fill="#5a8a3a"/></g><g transform="translate(80,0)"><path d="M10,3 L17,6.2 L17,14 L10,17.2 L3,14 L3,6.2Z" fill="#c89050" stroke="#2a1a08" stroke-width="0.8"/><path d="M3,6.2 L10,9.2 L17,6.2 M10,9.2 V17" stroke="#805018" stroke-width="0.7" fill="none"/><path d="M3.5,6.3 L10,3.3 L16.5,6.3 L10,9Z" fill="#e0b080"/></g><g transform="translate(100,0)"><rect x="2.5" y="8" width="9" height="5" rx="2.5" transform="rotate(-40 7 10.5)" fill="none" stroke="#c8c8c8" stroke-width="1.6"/><rect x="8.5" y="7" width="9" height="5" rx="2.5" transform="rotate(-40 13 9.5)" fill="none" stroke="#c8c8c8" stroke-width="1.6"/></g><g transform="translate(120,0)"><path d="M4.5,15.5 L11.5,8.5" stroke="#6a9ad8" stroke-width="2.6" stroke-linecap="round"/><path d="M10,10 A4.2,4.2 0 1 1 16.5,5.5 L13.8,6.8 L13.2,8.8 L15.5,8.2 L16.8,5.6" fill="none" stroke="#6a9ad8" stroke-width="2.2" stroke-linejoin="round"/></g><g transform="translate(140,0)"><path d="M4,5 L16,5 L10,15Z" fill="none" stroke="#ccc" stroke-width="1"/><circle cx="4" cy="5" r="1.6" fill="#fff" stroke="#111" stroke-width="0.6"/><circle cx="16" cy="5" r="1.6" fill="#fff" stroke="#111" stroke-width="0.6"/><circle cx="10" cy="15" r="1.6" fill="#fff" stroke="#111" stroke-width="0.6"/></g></svg>
<div class="a" style="left:1355px;top:169px;width:13px;height:13px;border-radius:50%;background:radial-gradient(circle at 35% 35%,#fff 0,#ddd 25%,#c08070 55%,#333 100%)"></div>
<svg class="a" style="left:1354px;top:54px" width="12" height="12"><path d="M1,0 L12,11 M5,0 L12,7 M9,0 L12,3" stroke="#aaa" stroke-width="1" fill="none"/><path d="M0,1 L11,12 M4,1 L11,8 M8,1 L11,4" stroke="#222" stroke-width="0.8" fill="none"/></svg>
<svg class="a" style="left:1354px;top:162px" width="12" height="12"><path d="M1,0 L12,11 M5,0 L12,7 M9,0 L12,3" stroke="#aaa" stroke-width="1" fill="none"/><path d="M0,1 L11,12 M4,1 L11,8 M8,1 L11,4" stroke="#222" stroke-width="0.8" fill="none"/></svg>
<svg class="a" style="left:1132px;top:54px" width="12" height="12"><path d="M1,0 L12,11 M5,0 L12,7 M9,0 L12,3" stroke="#aaa" stroke-width="1" fill="none"/><path d="M0,1 L11,12 M4,1 L11,8 M8,1 L11,4" stroke="#222" stroke-width="0.8" fill="none"/></svg>
<svg class="a" style="left:0px;top:708px" width="12" height="12"><path d="M0,2 L10,12 M0,6 L6,12 M0,10 L2,12" stroke="#aaa" stroke-width="1" fill="none"/></svg>
<svg class="a" style="left:1145px;top:148px" width="12" height="12"><path d="M0,2 L10,12 M0,6 L6,12 M0,10 L2,12" stroke="#aaa" stroke-width="1" fill="none"/></svg>
<svg class="a" style="left:1145px;top:708px" width="12" height="12"><path d="M0,2 L10,12 M0,6 L6,12 M0,10 L2,12" stroke="#aaa" stroke-width="1" fill="none"/></svg>
<svg class="a" style="left:0px;top:42px" width="12" height="12"><path d="M0,2 L10,12 M0,6 L6,12 M0,10 L2,12" stroke="#aaa" stroke-width="1" fill="none"/></svg>
<div class="a" style="left:1349px;top:194px;width:13px;height:522px;border-radius:6px;background:#5e5e5e"></div>
<div class="a" style="left:1349px;top:194px;width:13px;height:220px;border-radius:6px;background:linear-gradient(90deg,#a5a5a5,#8a8a8a);border:1px solid #444"></div>
<svg class="a" style="left:1154px;top:198px" width="190" height="18"><path d="M2,16 L7,11" stroke="#ddd" stroke-width="1.5"/><path d="M5,8 L10,13 L14,9 L15,5 L11,1 L7,4Z" fill="#ddd" stroke="#222" stroke-width="0.8"/><circle cx="29" cy="3" r="1.8" fill="#e8e070"/><rect x="33" y="4" width="5" height="10" rx="2.5" fill="#4a78c0" stroke="#111" stroke-width="0.6"/><circle cx="31" cy="13" r="3.5" fill="#ddd" stroke="#111" stroke-width="0.6"/><path d="M46,6 L49,9 L46,12Z" fill="#333"/><path d="M72,2 L79,5 L79,13 L72,16 L65,13 L65,5Z" fill="#f0a040" stroke="#3a2a10" stroke-width="0.7"/><path d="M65,5 L72,8 L79,5 M72,8 V16" stroke="#8a5010" stroke-width="0.6" fill="none"/><path d="M112,6 L115,9 L112,12Z" fill="#333"/><circle cx="136" cy="9" r="7" fill="#eee" stroke="#222" stroke-width="0.8"/><path d="M136,9 L143,9 A7,7 0 0 1 136,16Z M136,9 L129,9 A7,7 0 0 1 136,2Z" fill="#c08070"/></svg>
<div class="t" style="left:1237.20px;top:201.69px;font-size:11px;letter-spacing:0.973px;">Sph</div>
<div class="t" style="left:1302.40px;top:201.69px;font-size:11px;letter-spacing:0.776px;">Materi</div>
<div class="a" style="left:1153px;top:232px;width:160px;height:43px;border-radius:4px;background:#737373;border:1px solid #404040;box-shadow:inset 0 1px 0 #5a5a5a"></div>
<div class="a" style="left:1159px;top:241px;width:148px;height:18px;border-radius:2px;background:#5680c2"></div>
<div class="a" style="left:1162px;top:243px;width:14px;height:14px;border-radius:50%;background:radial-gradient(circle at 40% 30%,#9ab880,#4a6a38 50%,#253820)"></div>
<div class="t" style="left:1181.20px;top:245.69px;font-size:11px;letter-spacing:0.753px;">Material.001</div>
<div class="a" style="left:1163px;top:261px;width:8px;height:8px;border-radius:50%;border:1px solid #555"></div>
<div class="a" style="left:1165px;top:265px;width:4px;height:1px;background:#555"></div>
<div class="a" style="left:1167px;top:263px;width:1px;height:4px;background:#555"></div>
<div class="a" style="left:1234px;top:263px;width:14px;height:1px;background:#222"></div>
<div class="a" style="left:1234px;top:266px;width:14px;height:1px;background:#222"></div>
<div class="a" style="left:1234px;top:264px;width:14px;height:1px;background:#999"></div>
<div class="a" style="left:1234px;top:267px;width:14px;height:1px;background:#999"></div>
<div class="a" style="left:1321px;top:232px;width:20px;height:59px;border-radius:4px;border:1px solid #222;overflow:hidden"><div class="a" style="left:0;top:0;width:18px;height:19px;background:linear-gradient(#b0b0b0,#959595)"></div><div class="a" style="left:0;top:19px;width:18px;height:20px;background:linear-gradient(#b0b0b0,#959595);border-top:1px solid #444"></div><div class="a" style="left:0;top:39px;width:18px;height:20px;background:linear-gradient(#505050,#3c3c3c);border-top:1px solid #222"></div></div>
<svg class="a" style="left:1321px;top:232px" width="20" height="59"><path d="M10,4.5 V15.5 M4.5,10 H15.5" stroke="#222" stroke-width="4"/><path d="M10,5.5 V14.5 M5.5,10 H14.5" stroke="#fff" stroke-width="2"/><path d="M4.5,29.5 H15.5" stroke="#222" stroke-width="4"/><path d="M5.5,29.5 H14.5" stroke="#fff" stroke-width="2"/><path d="M6,45 L14,45 L10,53Z" fill="#111" stroke="#ccc" stroke-width="0.6"/></svg>
<div class="dk" style="left:1153px;top:297px;width:28px;height:20px;border-radius:4px 0 0 4px;background:linear-gradient(#505050,#3c3c3c)"></div>
<svg class="a" style="left:1157px;top:299px" width="16" height="16"><defs><radialGradient id="mg" cx="0.35" cy="0.3" r="0.8"><stop offset="0" stop-color="#fff"/><stop offset="1" stop-color="#555"/></radialGradient></defs><circle cx="8" cy="8" r="6.5" fill="url(#mg)" stroke="#222" stroke-width="0.8"/><path d="M8,8 L14.5,8 A6.5,6.5 0 0 1 8,14.5Z M8,8 L1.5,8 A6.5,6.5 0 0 1 8,1.5Z" fill="#c07060" opacity="0.85"/></svg>
<svg class="a" style="left:1172px;top:300px" width="8" height="14"><path d="M1,5 L4,1 L7,5Z M1,9 L4,13 L7,9Z" fill="#999"/></svg>
<div class="a" style="left:1180px;top:297px;width:36px;height:20px;background:linear-gradient(#b5b5b5,#a0a0a0);border:1px solid #222;border-left:none"></div>
<div class="t" style="left:1187.40px;top:302.69px;font-size:11px;letter-spacing:0.810px;">Mat</div>
<div class="a" style="left:1215px;top:297px;width:18px;height:20px;background:linear-gradient(#a0a0a0,#8e8e8e);border:1px solid #222;border-left:1px solid #555"></div>
<div class="t" style="left:1221.40px;top:302.69px;font-size:11px;letter-spacing:0.000px;">F</div>
<div class="a" style="left:1232px;top:297px;width:37px;height:20px;border-radius:0 4px 4px 0;background:linear-gradient(#a0a0a0,#8e8e8e);border:1px solid #222;border-left:1px solid #555"></div>
<div class="a" style="left:1250px;top:298px;width:1px;height:18px;background:#555"></div>
<svg class="a" style="left:1232px;top:297px" width="37" height="20"><path d="M9,3.5 V15.5 M3,9.5 H15" stroke="#222" stroke-width="4"/><path d="M9,4.5 V14.5 M4,9.5 H14" stroke="#fff" stroke-width="2"/><path d="M22.5,4.5 L31.5,14.5 M31.5,4.5 L22.5,14.5" stroke="#222" stroke-width="4"/><path d="M23,5 L31,14 M31,5 L23,14" stroke="#fff" stroke-width="2"/></svg>
<div class="btn" style="left:1277px;top:297px;width:18px;height:20px;background:linear-gradient(#a0a0a0,#8e8e8e)"></div>
<svg class="a" style="left:1279px;top:300px" width="14" height="14"><rect x="3" y="1" width="7" height="5" fill="#eee" stroke="#111" stroke-width="0.7"/><rect x="1" y="8" width="7" height="5" fill="#eee" stroke="#111" stroke-width="0.7"/><path d="M10,3 Q14,3 13,9 Q12,11 8,11" stroke="#8ab0e8" stroke-width="1" fill="none"/></svg>
<div class="dk" style="left:1303px;top:297px;width:38px;height:20px;background:linear-gradient(#505050,#3c3c3c)"></div>
<div class="t" style="left:1311.30px;top:302.69px;font-size:11px;letter-spacing:0.969px;color:#fff">Dat</div>
<svg class="a" style="left:1331px;top:300px" width="8" height="14"><path d="M1,5 L4,1 L7,5Z M1,9 L4,13 L7,9Z" fill="#999"/></svg>
<div class="a" style="left:1153px;top:322px;width:188px;height:20px;border-radius:4px;background:linear-gradient(#4e4e4e,#3c3c3c);border:1px solid #222;overflow:hidden"><div class="a" style="left:0;top:0;width:46px;height:18px;background:linear-gradient(#6a94d4,#4f78b8)"></div></div>
<div class="a" style="left:1199px;top:323px;width:1px;height:18px;background:#222"></div>
<div class="a" style="left:1246px;top:323px;width:1px;height:18px;background:#222"></div>
<div class="a" style="left:1293px;top:323px;width:1px;height:18px;background:#222"></div>
<div class="t" style="left:1158.40px;top:327.69px;font-size:11px;letter-spacing:0.742px;">Surfac</div>
<div class="t" style="left:1211.80px;top:327.69px;font-size:11px;letter-spacing:0.337px;color:#fff">Wire</div>
<div class="t" style="left:1249.00px;top:327.69px;font-size:11px;letter-spacing:0.946px;color:#fff">Volume</div>
<div class="t" style="left:1304.40px;top:327.69px;font-size:11px;letter-spacing:0.598px;color:#fff">Halo</div>
<div class="a" style="left:1150px;top:350px;width:194px;height:1px;background:#5e5e5e"></div>
<div class="a" style="left:1150px;top:351px;width:194px;height:1px;background:#7e7e7e"></div>
<svg class="a" style="left:1158px;top:357px" width="9" height="8"><path d="M0,0 L8,0 L4,7Z" fill="#1e1e1e"/></svg>
<div class="t" style="left:1170.60px;top:355.84px;font-size:12px;letter-spacing:0.564px;">Preview</div>
<svg class="a" style="left:1328px;top:360px" width="12" height="6" shape-rendering="crispEdges"><rect x="0" y="0" width="1" height="1" fill="#3a3a3a"/><rect x="1" y="1" width="1" height="1" fill="#8a8a8a"/><rect x="3" y="0" width="1" height="1" fill="#3a3a3a"/><rect x="4" y="1" width="1" height="1" fill="#8a8a8a"/><rect x="6" y="0" width="1" height="1" fill="#3a3a3a"/><rect x="7" y="1" width="1" height="1" fill="#8a8a8a"/><rect x="9" y="0" width="1" height="1" fill="#3a3a3a"/><rect x="10" y="1" width="1" height="1" fill="#8a8a8a"/><rect x="0" y="3" width="1" height="1" fill="#3a3a3a"/><rect x="1" y="4" width="1" height="1" fill="#8a8a8a"/><rect x="3" y="3" width="1" height="1" fill="#3a3a3a"/><rect x="4" y="4" width="1" height="1" fill="#8a8a8a"/><rect x="6" y="3" width="1" height="1" fill="#3a3a3a"/><rect x="7" y="4" width="1" height="1" fill="#8a8a8a"/><rect x="9" y="3" width="1" height="1" fill="#3a3a3a"/><rect x="10" y="4" width="1" height="1" fill="#8a8a8a"/></svg>
<div class="a" style="left:1153px;top:382px;width:150px;height:112px;border-radius:4px;border:1px solid #3a3a3a;overflow:hidden;background:#999"><svg width="150" height="112" style="position:absolute;left:-1px;top:-1px"><defs><radialGradient id="sph" cx="0.38" cy="0.3" r="0.75"><stop offset="0" stop-color="#6e9058"/><stop offset="0.45" stop-color="#557a40"/><stop offset="0.8" stop-color="#3c5a2c"/><stop offset="1" stop-color="#263a1c"/></radialGradient><radialGradient id="shd" cx="0.5" cy="0.5" r="0.5"><stop offset="0" stop-color="#000" stop-opacity="0.55"/><stop offset="1" stop-color="#000" stop-opacity="0"/></radialGradient><radialGradient id="hl" cx="0.5" cy="0.5" r="0.5"><stop offset="0.55" stop-color="#fff"/><stop offset="1" stop-color="#fff" stop-opacity="0"/></radialGradient></defs><polygon points="0.8,-32.8 19.8,-22.9 19.8,-3.4 0.8,-10.8" fill="#9d9d9d"/><polygon points="0.8,-10.8 19.8,-3.4 19.8,16.1 0.8,11.1" fill="#303030"/><polygon points="0.8,11.1 19.8,16.1 19.8,35.5 0.8,33.1" fill="#9d9d9d"/><polygon points="0.8,33.1 19.8,35.5 19.8,55.0 0.8,55.0" fill="#303030"/><polygon points="0.8,55.0 19.8,55.0 19.8,74.5 0.8,76.9" fill="#9d9d9d"/><polygon points="0.8,76.9 19.8,74.5 19.8,93.9 0.8,98.9" fill="#303030"/><polygon points="0.8,98.9 19.8,93.9 19.8,113.4 0.8,120.8" fill="#9d9d9d"/><polygon points="19.8,-22.9 38.8,-12.9 38.8,4.1 19.8,-3.4" fill="#303030"/><polygon points="19.8,-3.4 38.8,4.1 38.8,21.0 19.8,16.1" fill="#9d9d9d"/><polygon points="19.8,16.1 38.8,21.0 38.8,38.0 19.8,35.5" fill="#303030"/><polygon points="19.8,35.5 38.8,38.0 38.8,55.0 19.8,55.0" fill="#9d9d9d"/><polygon points="19.8,55.0 38.8,55.0 38.8,72.0 19.8,74.5" fill="#303030"/><polygon points="19.8,74.5 38.8,72.0 38.8,89.0 19.8,93.9" fill="#9d9d9d"/><polygon points="19.8,93.9 38.8,89.0 38.8,105.9 19.8,113.4" fill="#303030"/><polygon points="38.8,-12.9 57.8,-3.0 57.8,11.5 38.8,4.1" fill="#9d9d9d"/><polygon points="38.8,4.1 57.8,11.5 57.8,26.0 38.8,21.0" fill="#303030"/><polygon points="38.8,21.0 57.8,26.0 57.8,40.5 38.8,38.0" fill="#9d9d9d"/><polygon points="38.8,38.0 57.8,40.5 57.8,55.0 38.8,55.0" fill="#303030"/><polygon points="38.8,55.0 57.8,55.0 57.8,69.5 38.8,72.0" fill="#9d9d9d"/><polygon points="38.8,72.0 57.8,69.5 57.8,84.0 38.8,89.0" fill="#303030"/><polygon points="38.8,89.0 57.8,84.0 57.8,98.5 38.8,105.9" fill="#9d9d9d"/><polygon points="57.8,-3.0 76.8,5.1 76.8,17.6 57.8,11.5" fill="#303030"/><polygon points="57.8,11.5 76.8,17.6 76.8,30.0 57.8,26.0" fill="#9d9d9d"/><polygon points="57.8,26.0 76.8,30.0 76.8,42.5 57.8,40.5" fill="#303030"/><polygon points="57.8,40.5 76.8,42.5 76.8,55.0 57.8,55.0" fill="#9d9d9d"/><polygon points="57.8,55.0 76.8,55.0 76.8,67.5 57.8,69.5" fill="#303030"/><polygon points="57.8,69.5 76.8,67.5 76.8,80.0 57.8,84.0" fill="#9d9d9d"/><polygon points="57.8,84.0 76.8,80.0 76.8,92.4 57.8,98.5" fill="#303030"/><polygon points="76.8,5.1 95.8,-4.9 95.8,10.1 76.8,17.6" fill="#9d9d9d"/><polygon points="76.8,17.6 95.8,10.1 95.8,25.1 76.8,30.0" fill="#303030"/><polygon points="76.8,30.0 95.8,25.1 95.8,40.0 76.8,42.5" fill="#9d9d9d"/><polygon points="76.8,42.5 95.8,40.0 95.8,55.0 76.8,55.0" fill="#303030"/><polygon points="76.8,55.0 95.8,55.0 95.8,70.0 76.8,67.5" fill="#9d9d9d"/><polygon points="76.8,67.5 95.8,70.0 95.8,84.9 76.8,80.0" fill="#303030"/><polygon points="76.8,80.0 95.8,84.9 95.8,99.9 76.8,92.4" fill="#9d9d9d"/><polygon points="95.8,-4.9 114.8,-14.8 114.8,2.7 95.8,10.1" fill="#303030"/><polygon points="95.8,10.1 114.8,2.7 114.8,20.1 95.8,25.1" fill="#9d9d9d"/><polygon points="95.8,25.1 114.8,20.1 114.8,37.6 95.8,40.0" fill="#303030"/><polygon points="95.8,40.0 114.8,37.6 114.8,55.0 95.8,55.0" fill="#9d9d9d"/><polygon points="95.8,55.0 114.8,55.0 114.8,72.4 95.8,70.0" fill="#303030"/><polygon points="95.8,70.0 114.8,72.4 114.8,89.9 95.8,84.9" fill="#9d9d9d"/><polygon points="95.8,84.9 114.8,89.9 114.8,107.3 95.8,99.9" fill="#303030"/><polygon points="114.8,-14.8 133.8,-24.7 133.8,-4.8 114.8,2.7" fill="#9d9d9d"/><polygon points="114.8,2.7 133.8,-4.8 133.8,15.1 114.8,20.1" fill="#303030"/><polygon points="114.8,20.1 133.8,15.1 133.8,35.1 114.8,37.6" fill="#9d9d9d"/><polygon points="114.8,37.6 133.8,35.1 133.8,55.0 114.8,55.0" fill="#303030"/><polygon points="114.8,55.0 133.8,55.0 133.8,74.9 114.8,72.4" fill="#9d9d9d"/><polygon points="114.8,72.4 133.8,74.9 133.8,94.9 114.8,89.9" fill="#303030"/><polygon points="114.8,89.9 133.8,94.9 133.8,114.8 114.8,107.3" fill="#9d9d9d"/><polygon points="133.8,-24.7 152.8,-34.7 152.8,-12.3 133.8,-4.8" fill="#303030"/><polygon points="133.8,-4.8 152.8,-12.3 152.8,10.2 133.8,15.1" fill="#9d9d9d"/><polygon points="133.8,15.1 152.8,10.2 152.8,32.6 133.8,35.1" fill="#303030"/><polygon points="133.8,35.1 152.8,32.6 152.8,55.0 133.8,55.0" fill="#9d9d9d"/><polygon points="133.8,55.0 152.8,55.0 152.8,77.4 133.8,74.9" fill="#303030"/><polygon points="133.8,74.9 152.8,77.4 152.8,99.8 133.8,94.9" fill="#9d9d9d"/><polygon points="133.8,94.9 152.8,99.8 152.8,122.3 133.8,114.8" fill="#303030"/><ellipse cx="75" cy="106" rx="50" ry="9" fill="url(#shd)"/><circle cx="75" cy="55.4" r="50.6" fill="url(#sph)"/><circle cx="63.4" cy="38.5" r="6.5" fill="url(#hl)"/></svg></div>
<div class="a" style="left:1311px;top:382px;width:30px;height:120px;border-radius:4px;border:1px solid #222;background:linear-gradient(#505050,#3c3c3c);overflow:hidden"></div>
<div class="a" style="left:1312px;top:402px;width:28px;height:1px;background:#222"></div>
<div class="a" style="left:1312px;top:422px;width:28px;height:1px;background:#222"></div>
<div class="a" style="left:1312px;top:442px;width:28px;height:1px;background:#222"></div>
<div class="a" style="left:1312px;top:462px;width:28px;height:1px;background:#222"></div>
<div class="a" style="left:1312px;top:482px;width:28px;height:1px;background:#222"></div>
<div class="a" style="left:1312px;top:402px;width:28px;height:19px;background:linear-gradient(#6a94d4,#4f78b8)"></div>
<svg class="a" style="left:1311px;top:382px" width="30" height="120"><rect x="8" y="4" width="13" height="12" fill="#999" stroke="#333" stroke-width="0.8"/><circle cx="15" cy="30" r="7" fill="#ddd" stroke="#111" stroke-width="1"/><path d="M15,43 L21,46 L21,53 L15,56 L9,53 L9,46Z" fill="#aaa" stroke="#333" stroke-width="0.6"/><circle cx="15" cy="69" r="4" fill="#bbb"/><circle cx="10" cy="67" r="2.5" fill="#bbb"/><circle cx="20" cy="67" r="2.5" fill="#bbb"/><rect x="13" y="72" width="4" height="5" fill="#bbb"/><path d="M9,96 Q9,88 14,84 M13,96 Q14,90 18,87 M17,97 Q18,93 22,91" stroke="#bbb" stroke-width="1.3" fill="none"/><circle cx="14" cy="113" r="5" fill="#ccc" stroke="#222" stroke-width="0.6"/><circle cx="10" cy="105" r="2" fill="#dd6"/><circle cx="20" cy="106" r="3" fill="#8ab"/></svg>
<div class="a" style="left:1221px;top:497px;width:14px;height:1px;background:#222"></div>
<div class="a" style="left:1221px;top:500px;width:14px;height:1px;background:#222"></div>
<div class="a" style="left:1221px;top:498px;width:14px;height:1px;background:#999"></div>
<div class="a" style="left:1221px;top:501px;width:14px;height:1px;background:#999"></div>
<div class="a" style="left:1150px;top:510px;width:194px;height:1px;background:#5e5e5e"></div>
<div class="a" style="left:1150px;top:511px;width:194px;height:1px;background:#7e7e7e"></div>
<svg class="a" style="left:1158px;top:518px" width="9" height="8"><path d="M0,0 L8,0 L4,7Z" fill="#1e1e1e"/></svg>
<div class="t" style="left:1170.60px;top:516.84px;font-size:12px;letter-spacing:0.690px;">Diffuse</div>
<svg class="a" style="left:1328px;top:521px" width="12" height="6" shape-rendering="crispEdges"><rect x="0" y="0" width="1" height="1" fill="#3a3a3a"/><rect x="1" y="1" width="1" height="1" fill="#8a8a8a"/><rect x="3" y="0" width="1" height="1" fill="#3a3a3a"/><rect x="4" y="1" width="1" height="1" fill="#8a8a8a"/><rect x="6" y="0" width="1" height="1" fill="#3a3a3a"/><rect x="7" y="1" width="1" height="1" fill="#8a8a8a"/><rect x="9" y="0" width="1" height="1" fill="#3a3a3a"/><rect x="10" y="1" width="1" height="1" fill="#8a8a8a"/><rect x="0" y="3" width="1" height="1" fill="#3a3a3a"/><rect x="1" y="4" width="1" height="1" fill="#8a8a8a"/><rect x="3" y="3" width="1" height="1" fill="#3a3a3a"/><rect x="4" y="4" width="1" height="1" fill="#8a8a8a"/><rect x="6" y="3" width="1" height="1" fill="#3a3a3a"/><rect x="7" y="4" width="1" height="1" fill="#8a8a8a"/><rect x="9" y="3" width="1" height="1" fill="#3a3a3a"/><rect x="10" y="4" width="1" height="1" fill="#8a8a8a"/></svg>
<div class="a" style="left:1153px;top:542px;width:90px;height:20px;border-radius:4px;background:#6a8f52;border:1px solid #2a2a2a"></div>
<div class="dk" style="left:1251px;top:542px;width:90px;height:20px;background:linear-gradient(#505050,#3c3c3c)"></div>
<div class="t" style="left:1259.20px;top:547.69px;font-size:11px;letter-spacing:1.051px;color:#fff">Lambert</div>
<svg class="a" style="left:1331px;top:545px" width="8" height="14"><path d="M1,5 L4,1 L7,5Z M1,9 L4,13 L7,9Z" fill="#999"/></svg>
<div class="a" style="left:1153px;top:564px;width:90px;height:20px;border-radius:10px;border:1px solid #2a2a2a;overflow:hidden;background:linear-gradient(#6a6a6a,#7c7c7c)"><div class="a" style="left:70px;top:0;width:90px;height:18px;background:linear-gradient(#b8b8b8,#a6a6a6)"></div></div>
<div class="t" style="left:1166.40px;top:569.69px;font-size:11px;letter-spacing:0.933px;">Inte: 0.778</div>
<div class="chk" style="left:1254px;top:567px;width:14px;height:14px;background:linear-gradient(#505050,#424242)"></div>
<div class="t" style="left:1276.40px;top:569.69px;font-size:11px;letter-spacing:0.492px;">Ramp</div>
<div class="a" style="left:1150px;top:597px;width:194px;height:1px;background:#5e5e5e"></div>
<div class="a" style="left:1150px;top:598px;width:194px;height:1px;background:#7e7e7e"></div>
<svg class="a" style="left:1158px;top:605px" width="9" height="8"><path d="M0,0 L8,0 L4,7Z" fill="#1e1e1e"/></svg>
<div class="t" style="left:1170.60px;top:603.84px;font-size:12px;letter-spacing:0.919px;">Specular</div>
<svg class="a" style="left:1328px;top:608px" width="12" height="6" shape-rendering="crispEdges"><rect x="0" y="0" width="1" height="1" fill="#3a3a3a"/><rect x="1" y="1" width="1" height="1" fill="#8a8a8a"/><rect x="3" y="0" width="1" height="1" fill="#3a3a3a"/><rect x="4" y="1" width="1" height="1" fill="#8a8a8a"/><rect x="6" y="0" width="1" height="1" fill="#3a3a3a"/><rect x="7" y="1" width="1" height="1" fill="#8a8a8a"/><rect x="9" y="0" width="1" height="1" fill="#3a3a3a"/><rect x="10" y="1" width="1" height="1" fill="#8a8a8a"/><rect x="0" y="3" width="1" height="1" fill="#3a3a3a"/><rect x="1" y="4" width="1" height="1" fill="#8a8a8a"/><rect x="3" y="3" width="1" height="1" fill="#3a3a3a"/><rect x="4" y="4" width="1" height="1" fill="#8a8a8a"/><rect x="6" y="3" width="1" height="1" fill="#3a3a3a"/><rect x="7" y="4" width="1" height="1" fill="#8a8a8a"/><rect x="9" y="3" width="1" height="1" fill="#3a3a3a"/><rect x="10" y="4" width="1" height="1" fill="#8a8a8a"/></svg>
<div class="a" style="left:1153px;top:629px;width:90px;height:20px;border-radius:4px;background:#ffffff;border:1px solid #2a2a2a"></div>
<div class="dk" style="left:1251px;top:629px;width:90px;height:20px;background:linear-gradient(#505050,#3c3c3c)"></div>
<div class="t" style="left:1259.20px;top:634.69px;font-size:11px;letter-spacing:0.695px;color:#fff">WardIso</div>
<svg class="a" style="left:1331px;top:632px" width="8" height="14"><path d="M1,5 L4,1 L7,5Z M1,9 L4,13 L7,9Z" fill="#999"/></svg>
<div class="a" style="left:1153px;top:651px;width:90px;height:20px;border-radius:10px;border:1px solid #2a2a2a;overflow:hidden;background:linear-gradient(#6a6a6a,#7c7c7c)"><div class="a" style="left:58px;top:0;width:90px;height:18px;background:linear-gradient(#b8b8b8,#a6a6a6)"></div></div>
<div class="t" style="left:1166.40px;top:656.69px;font-size:11px;letter-spacing:0.903px;">Inte: 0.625</div>
<div class="chk" style="left:1254px;top:654px;width:14px;height:14px;background:linear-gradient(#505050,#424242)"></div>
<div class="t" style="left:1276.40px;top:656.69px;font-size:11px;letter-spacing:0.492px;">Ramp</div>
<div class="a" style="left:1153px;top:676px;width:188px;height:20px;border-radius:10px;border:1px solid #2a2a2a;overflow:hidden;background:linear-gradient(#6a6a6a,#7c7c7c)"><div class="a" style="left:30px;top:0;width:188px;height:18px;background:linear-gradient(#b8b8b8,#a6a6a6)"></div></div>
<div class="t" style="left:1167.40px;top:681.69px;font-size:11px;letter-spacing:0.613px;">Slope:</div>
<div class="t" style="left:1294.70px;top:681.69px;font-size:11px;letter-spacing:0.773px;">0.052</div>
<div class="a" style="left:1150px;top:703px;width:194px;height:1px;background:#5e5e5e"></div>
<div class="a" style="left:1150px;top:704px;width:194px;height:1px;background:#7e7e7e"></div>
<svg class="a" style="left:1158px;top:711px" width="9" height="8"><path d="M0,0 L8,0 L4,7Z" fill="#1e1e1e"/></svg>
<div class="t" style="left:1170.60px;top:709.84px;font-size:12px;letter-spacing:0.000px;">Shading</div>
<svg class="a" style="left:1328px;top:714px" width="12" height="6" shape-rendering="crispEdges"><rect x="0" y="0" width="1" height="1" fill="#3a3a3a"/><rect x="1" y="1" width="1" height="1" fill="#8a8a8a"/><rect x="3" y="0" width="1" height="1" fill="#3a3a3a"/><rect x="4" y="1" width="1" height="1" fill="#8a8a8a"/><rect x="6" y="0" width="1" height="1" fill="#3a3a3a"/><rect x="7" y="1" width="1" height="1" fill="#8a8a8a"/><rect x="9" y="0" width="1" height="1" fill="#3a3a3a"/><rect x="10" y="1" width="1" height="1" fill="#8a8a8a"/><rect x="0" y="3" width="1" height="1" fill="#3a3a3a"/><rect x="1" y="4" width="1" height="1" fill="#8a8a8a"/><rect x="3" y="3" width="1" height="1" fill="#3a3a3a"/><rect x="4" y="4" width="1" height="1" fill="#8a8a8a"/><rect x="6" y="3" width="1" height="1" fill="#3a3a3a"/><rect x="7" y="4" width="1" height="1" fill="#8a8a8a"/><rect x="9" y="3" width="1" height="1" fill="#3a3a3a"/><rect x="10" y="4" width="1" height="1" fill="#8a8a8a"/></svg>
<svg class="a" style="left:0;top:0" width="1366" height="60"><g transform="translate(14,12.8) scale(0.5)"><g stroke="#f28c1a" stroke-linecap="round"><path d="M-5.2,-17 L6.5,-9.3" stroke-width="4.6"/><path d="M-19,-9.5 L0.5,-9.5" stroke-width="4.2"/><path d="M-24,5.5 L-8.5,-5.3" stroke-width="5"/></g><circle cx="0" cy="0" r="12.6" fill="#f28c1a"/><circle cx="-0.2" cy="-0.3" r="8" fill="#fff"/><circle cx="-0.2" cy="-0.3" r="5.2" fill="#0b4a9c"/></g></svg>
<div class="t" style="left:29.50px;top:6.30px;font-size:15px;letter-spacing:-0.118px;">Blender</div>
<div class="a" style="left:1243px;top:2px;width:38px;height:22px;border-radius:3px;border:1px solid #6d7f96;background:linear-gradient(#dfe9f5 0,#c7d7ea 45%,#a9c0dc 50%,#b8cde6 100%);box-shadow:inset 0 0 0 1px rgba(255,255,255,0.5)"></div>
<div class="a" style="left:1284px;top:2px;width:38px;height:22px;border-radius:3px;border:1px solid #6d7f96;background:linear-gradient(#dfe9f5 0,#c7d7ea 45%,#a9c0dc 50%,#b8cde6 100%);box-shadow:inset 0 0 0 1px rgba(255,255,255,0.5)"></div>
<div class="a" style="left:1325px;top:2px;width:40px;height:22px;border-radius:3px;border:1px solid #6d7f96;background:linear-gradient(#e8a090 0,#d77a62 45%,#c3482c 50%,#d0664a 100%);box-shadow:inset 0 0 0 1px rgba(255,255,255,0.5)"></div>
<div class="a" style="left:1257px;top:13px;width:12px;height:4px;background:#fff;border:1px solid #333;border-radius:1px"></div>
<svg class="a" style="left:1295px;top:5px" width="18" height="16"><rect x="6" y="2" width="9" height="8" fill="none" stroke="#333" stroke-width="3"/><rect x="6" y="2" width="9" height="8" fill="none" stroke="#fff" stroke-width="1.4"/><rect x="2" y="6" width="9" height="8" fill="#c7d7ea" stroke="#333" stroke-width="3"/><rect x="2" y="6" width="9" height="8" fill="none" stroke="#fff" stroke-width="1.4"/></svg>
<svg class="a" style="left:1336px;top:5px" width="18" height="16"><path d="M3,2 L15,14 M15,2 L3,14" stroke="#333" stroke-width="4.6"/><path d="M3,2 L15,14 M15,2 L3,14" stroke="#fff" stroke-width="2.6"/></svg>
<div class="dk" style="left:8px;top:31px;width:30px;height:20px;background:linear-gradient(#4e4e4e,#3e3e3e)"></div>
<div class="a" style="left:12px;top:33px;width:15px;height:15px;border-radius:50%;background:radial-gradient(circle at 50% 30%,#8aa8d8,#2a4a88);border:1px solid #111"></div>
<div class="t" style="left:17px;top:34px;font-size:12px;font-weight:bold;color:#fff;font-family:'Liberation Serif'">i</div>
<svg class="a" style="left:28px;top:34px" width="8" height="14"><path d="M1,5 L4,1 L7,5Z M1,9 L4,13 L7,9Z" fill="#999"/></svg>
<div class="t" style="left:51.00px;top:36.69px;font-size:11px;letter-spacing:0.131px;">File</div>
<div class="t" style="left:90.00px;top:36.69px;font-size:11px;letter-spacing:0.717px;">Render</div>
<div class="t" style="left:150.00px;top:36.69px;font-size:11px;letter-spacing:0.464px;">Window</div>
<div class="t" style="left:211.00px;top:36.69px;font-size:11px;letter-spacing:0.665px;">Help</div>
<div class="a" style="left:249px;top:31px;width:192px;height:20px;border-radius:4px;border:1px solid #222;overflow:hidden;background:#999"><div class="a" style="left:0;top:0;width:32px;height:18px;background:linear-gradient(#505050,#3c3c3c)"></div><div class="a" style="left:32px;top:0;width:119px;height:18px;background:linear-gradient(#b5b5b5,#a2a2a2)"></div><div class="a" style="left:151px;top:0;width:20px;height:18px;background:linear-gradient(#a2a2a2,#909090);border-left:1px solid #444"></div><div class="a" style="left:171px;top:0;width:20px;height:18px;background:linear-gradient(#a2a2a2,#909090);border-left:1px solid #444"></div></div>
<svg class="a" style="left:254px;top:34px" width="26" height="14"><rect x="1" y="1" width="5" height="5" fill="#fff" stroke="#222" stroke-width="0.6"/><rect x="1" y="7" width="5" height="6" fill="#fff" stroke="#222" stroke-width="0.6"/><rect x="7" y="1" width="6" height="12" fill="#fff" stroke="#222" stroke-width="0.6"/><path d="M17,5 L20,1 L23,5Z M17,9 L20,13 L23,9Z" fill="#999"/></svg>
<div class="t" style="left:288.30px;top:36.69px;font-size:11px;letter-spacing:0.801px;">Default</div>
<svg class="a" style="left:401px;top:32px" width="40" height="18"><path d="M10,3 V15 M4,9 H16" stroke="#222" stroke-width="4"/><path d="M10,3 V15 M4,9 H16" stroke="#fff" stroke-width="2"/><path d="M25,4 L34,14 M34,4 L25,14" stroke="#222" stroke-width="4"/><path d="M25,4 L34,14 M34,4 L25,14" stroke="#fff" stroke-width="2"/></svg>
<div class="a" style="left:446px;top:31px;width:216px;height:20px;border-radius:4px;border:1px solid #222;overflow:hidden;background:#999"><div class="a" style="left:0;top:0;width:31px;height:18px;background:linear-gradient(#505050,#3c3c3c)"></div><div class="a" style="left:31px;top:0;width:120px;height:18px;background:linear-gradient(#b5b5b5,#a2a2a2)"></div><div class="a" style="left:151px;top:0;width:24px;height:18px;background:linear-gradient(#9a9a9a,#8a8a8a);border-left:1px solid #555"></div><div class="a" style="left:175px;top:0;width:20px;height:18px;background:linear-gradient(#a2a2a2,#909090);border-left:1px solid #444"></div><div class="a" style="left:195px;top:0;width:20px;height:18px;background:linear-gradient(#a2a2a2,#909090);border-left:1px solid #444"></div></div>
<svg class="a" style="left:451px;top:33px" width="26" height="16"><circle cx="4" cy="2.5" r="1.8" fill="#e8e070"/><rect x="8" y="2" width="5" height="10" rx="2.5" fill="#4a78c0" stroke="#111" stroke-width="0.6"/><circle cx="6" cy="12" r="3.5" fill="#eee" stroke="#111" stroke-width="0.6"/><path d="M17,6 L20,2 L23,6Z M17,10 L20,14 L23,10Z" fill="#999"/></svg>
<div class="t" style="left:485.30px;top:36.69px;font-size:11px;letter-spacing:0.682px;">Scene</div>
<div class="t" style="left:606.60px;top:36.69px;font-size:11px;letter-spacing:0.000px;color:#444">2</div>
<svg class="a" style="left:622px;top:32px" width="40" height="18"><path d="M10,3 V15 M4,9 H16" stroke="#222" stroke-width="4"/><path d="M10,3 V15 M4,9 H16" stroke="#fff" stroke-width="2"/><path d="M25,4 L34,14 M34,4 L25,14" stroke="#222" stroke-width="4"/><path d="M25,4 L34,14 M34,4 L25,14" stroke="#fff" stroke-width="2"/></svg>
<div class="dk" style="left:678px;top:31px;width:123px;height:20px;background:linear-gradient(#505050,#3c3c3c)"></div>
<div class="t" style="left:686.20px;top:36.69px;font-size:11px;letter-spacing:0.778px;color:#fff">Blender Render</div>
<svg class="a" style="left:790px;top:34px" width="8" height="14"><path d="M1,5 L4,1 L7,5Z M1,9 L4,13 L7,9Z" fill="#aaa"/></svg>
<svg class="a" style="left:0;top:0" width="1366" height="60"><g transform="translate(829.5,43) scale(0.42)"><g stroke="#f28c1a" stroke-linecap="round"><path d="M-5.2,-17 L6.5,-9.3" stroke-width="4.6"/><path d="M-19,-9.5 L0.5,-9.5" stroke-width="4.2"/><path d="M-24,5.5 L-8.5,-5.3" stroke-width="5"/></g><circle cx="0" cy="0" r="12.6" fill="#f28c1a"/><circle cx="-0.2" cy="-0.3" r="8" fill="#fff"/><circle cx="-0.2" cy="-0.3" r="5.2" fill="#0b4a9c"/></g></svg>
<div class="t" style="left:845.00px;top:36.69px;font-size:11px;letter-spacing:0.887px;">v2.73 | Verts:9,512 | Faces:4,791 | Tris:9,582 | Objects:1/8 | Lamps:0/3 | Mem:124.32M</div>
<div class="t" style="left:1349.30px;top:37.69px;font-size:11px;letter-spacing:0.000px;">|</div>
<div class="t" style="left:1356.00px;top:36.69px;font-size:11px;letter-spacing:0.600px;">Sp</div>
<div class="dk" style="left:8px;top:698px;width:30px;height:20px;background:linear-gradient(#4e4e4e,#3e3e3e)"></div>
<svg class="a" style="left:11px;top:700px" width="26" height="16"><rect x="3" y="1" width="7" height="5" fill="#fff" stroke="#111" stroke-width="0.7"/><rect x="1" y="9" width="7" height="5" fill="#fff" stroke="#111" stroke-width="0.7"/><circle cx="10.5" cy="4" r="1" fill="#f0a030"/><circle cx="8.5" cy="11.5" r="1" fill="#f0a030"/><path d="M10,4 Q14,4 13,9 Q12,11.5 9,11.5" stroke="#8ab0e8" stroke-width="1" fill="none"/><path d="M17,6 L20,2 L23,6Z M17,10 L20,14 L23,10Z" fill="#999"/></svg>
<div class="t" style="left:51.00px;top:703.69px;font-size:11px;letter-spacing:0.567px;">View</div>
<div class="t" style="left:96.60px;top:703.69px;font-size:11px;letter-spacing:0.797px;">Select</div>
<div class="t" style="left:152.00px;top:703.69px;font-size:11px;letter-spacing:0.473px;">Add</div>
<div class="t" style="left:192.60px;top:703.69px;font-size:11px;letter-spacing:0.507px;">Node</div>
<div class="dk" style="left:234px;top:698px;width:60px;height:20px;background:linear-gradient(#505050,#3c3c3c)"></div>
<div class="a" style="left:254px;top:699px;width:20px;height:18px;background:linear-gradient(#6a94d4,#4f78b8)"></div>
<div class="a" style="left:274px;top:699px;width:1px;height:18px;background:#222"></div>
<svg class="a" style="left:234px;top:698px" width="60" height="20"><circle cx="10" cy="10" r="6" fill="#777" stroke="#222" stroke-width="0.8"/><path d="M10,10 L16,10 A6,6 0 0 1 10,16Z M10,10 L4,10 A6,6 0 0 1 10,4Z" fill="#553a33"/><rect x="25" y="5" width="9" height="9" fill="#d8c898" stroke="#222" stroke-width="0.6"/><rect x="23" y="3" width="9" height="9" fill="#fff" stroke="#222" stroke-width="0.6"/><rect x="27" y="4" width="3" height="5" fill="#3a6ac0"/><rect x="44" y="4" width="12" height="12" fill="#ddd"/><path d="M44,4 h3v3h-3z M50,4 h3v3h-3z M47,7 h3v3h-3z M53,7 h3v3h-3z M44,10 h3v3h-3z M50,10 h3v3h-3z M47,13 h3v3h-3z M53,13 h3v3h-3z" fill="#a03030"/></svg>
<div class="chk" style="left:302px;top:701px;width:14px;height:14px;background:linear-gradient(#505050,#424242)"></div>
<svg class="a" style="left:303px;top:700px" width="14" height="14"><path d="M3,7 L6,10 L12,2" stroke="#e0e0e0" stroke-width="2" fill="none"/></svg>
<div class="t" style="left:324.00px;top:703.69px;font-size:11px;letter-spacing:0.761px;color:#fff">Use Nodes</div>
<div class="chk" style="left:403px;top:701px;width:14px;height:14px;background:linear-gradient(#505050,#424242)"></div>
<div class="t" style="left:425.50px;top:703.69px;font-size:11px;letter-spacing:0.753px;color:#fff">Free Unused</div>
<div class="chk" style="left:514px;top:701px;width:14px;height:14px;background:linear-gradient(#505050,#424242)"></div>
<svg class="a" style="left:515px;top:700px" width="14" height="14"><path d="M3,7 L6,10 L12,2" stroke="#e0e0e0" stroke-width="2" fill="none"/></svg>
<div class="t" style="left:536.40px;top:703.69px;font-size:11px;letter-spacing:0.750px;color:#fff">Backdrop</div>
<div class="dk" style="left:603px;top:698px;width:120px;height:20px;background:linear-gradient(#505050,#3c3c3c)"></div>
<div class="a" style="left:604px;top:699px;width:19px;height:18px;background:linear-gradient(#6a94d4,#4f78b8)"></div>
<div class="a" style="left:623px;top:699px;width:1px;height:18px;background:#222"></div>
<div class="a" style="left:643px;top:699px;width:1px;height:18px;background:#222"></div>
<div class="a" style="left:663px;top:699px;width:1px;height:18px;background:#222"></div>
<div class="a" style="left:683px;top:699px;width:1px;height:18px;background:#222"></div>
<div class="a" style="left:703px;top:699px;width:1px;height:18px;background:#222"></div>
<svg class="a" style="left:603px;top:698px" width="120" height="20"><path d="M4,4 h5v3h-5z M12,4 h4v3h-4z M6,8 h4v3h-4z" fill="#c03030"/><path d="M4,16 L16,4" stroke="#fff" stroke-width="1.3"/><path d="M9,8 h3v3h-3z M4,12 h3v3h-3z" fill="#e0a030"/><rect x="24" y="4" width="12" height="12" fill="#ddd"/><path d="M24,4 h3v3h-3z M30,4 h3v3h-3z M27,7 h3v3h-3z M33,7 h3v3h-3z M24,10 h3v3h-3z M30,10 h3v3h-3z M27,13 h3v3h-3z M33,13 h3v3h-3z" fill="#a04040"/><path d="M44,16 L56,4 L56,16Z" fill="#333"/><path d="M44,16 L44,4 L56,4Z" fill="#aaa"/><circle cx="70" cy="10" r="6" fill="#c02828" stroke="#333" stroke-width="0.6"/><circle cx="90" cy="10" r="6" fill="#28a028" stroke="#333" stroke-width="0.6"/><circle cx="110" cy="10" r="6" fill="#3838b8" stroke="#333" stroke-width="0.6"/></svg>
<div class="chk" style="left:731px;top:701px;width:14px;height:14px;background:linear-gradient(#505050,#424242)"></div>
<svg class="a" style="left:732px;top:700px" width="14" height="14"><path d="M3,7 L6,10 L12,2" stroke="#e0e0e0" stroke-width="2" fill="none"/></svg>
<div class="t" style="left:753.20px;top:703.69px;font-size:11px;letter-spacing:0.640px;color:#fff">Auto Render</div>
<div class="btn" style="left:836px;top:698px;width:20px;height:20px;background:linear-gradient(#a0a0a0,#8e8e8e)"></div>
<svg class="a" style="left:838px;top:700px" width="16" height="16"><path d="M2,15 L7,10" stroke="#fff" stroke-width="1.5"/><path d="M5,8 L9,12 L12,9 L13,5 L10,2 L7,3Z" fill="#eee" stroke="#222" stroke-width="0.8"/></svg>
<div class="btn" style="left:861px;top:698px;width:20px;height:20px;background:linear-gradient(#8a8a8a,#7a7a7a);border-color:#555"></div>
<svg class="a" style="left:863px;top:700px" width="16" height="16"><path d="M5,14 V5 M2,8 L5,4 L8,8 M5,11 H13" stroke="#bbb" stroke-width="1.6" fill="none"/></svg>
<div class="a" style="left:897px;top:698px;width:55px;height:20px;border-radius:4px;border:1px solid #222;overflow:hidden;background:linear-gradient(#505050,#3c3c3c)"><div class="a" style="left:0;top:0;width:19px;height:18px;background:linear-gradient(#8a8a8a,#7a7a7a)"></div></div>
<svg class="a" style="left:897px;top:698px" width="55" height="20"><path d="M5,13 L11,6 a3,3 0 0 1 4,4 L9,16" stroke="#bbb" stroke-width="2" fill="none"/><path d="M25,7 V16 M30,7 V16 M22,10 H33 M22,14 H33" stroke="#fff" stroke-width="1"/><circle cx="25" cy="7" r="2.5" fill="#5aa0ff" stroke="#fff" stroke-width="1"/><path d="M42,7 L45,3 L48,7Z M42,11 L45,15 L48,11Z" fill="#999"/></svg>
<div class="btn" style="left:957px;top:698px;width:40px;height:20px;background:linear-gradient(#a0a0a0,#8e8e8e)"></div>
<div class="a" style="left:976px;top:699px;width:1px;height:18px;background:#444"></div>
<svg class="a" style="left:957px;top:698px" width="40" height="20"><rect x="6" y="4" width="9" height="10" fill="#c8b070" stroke="#222" stroke-width="0.7"/><rect x="8" y="2" width="5" height="3" fill="#eee" stroke="#222" stroke-width="0.5"/><path d="M3,17 L9,11 M5,11 H9 V15" stroke="#fff" stroke-width="1.4" fill="none"/><rect x="25" y="3" width="9" height="10" fill="#c8b070" stroke="#222" stroke-width="0.7"/><rect x="27" y="1" width="5" height="3" fill="#eee" stroke="#222" stroke-width="0.5"/><path d="M31,11 L37,17 M33,17 H37 V13" stroke="#fff" stroke-width="1.4" fill="none"/></svg>
<div class="a" style="left:0px;top:721px;width:1366px;height:47px;background:linear-gradient(90deg,#8299b2 0,#8aa2bc 60px,#a6bfda 95px,#a8c1dc 1057px,#93a9c3 1072px,#8197b1 1093px,#7d93ad 100%)"></div>
<div class="a" style="left:0px;top:720px;width:1366px;height:1px;background:#5a6a7a"></div>
<div class="a" style="left:0px;top:721px;width:1366px;height:1px;background:#c9dbee"></div>
<div class="a" style="left:352px;top:721px;width:67px;height:47px;border-radius:3px;border:1px solid #5d6e82;background:linear-gradient(#eef3f9,#d5e1ee);box-shadow:inset 0 0 0 1px rgba(255,255,255,0.55)"></div>
<div class="a" style="left:771px;top:721px;width:67px;height:47px;border-radius:3px;border:1px solid #5d6e82;background:linear-gradient(#f4ecc0,#e8cf8e 60%,#e2c27c);box-shadow:inset 0 0 0 1px rgba(255,255,255,0.55)"></div>
<div class="a" style="left:842px;top:721px;width:66px;height:47px;border-radius:3px;border:1px solid #5d6e82;background:linear-gradient(#dbe6f2,#b8cbe2);box-shadow:inset 0 0 0 1px rgba(255,255,255,0.55)"></div>
<svg class="a" style="left:0;top:718px" width="1366" height="50"><defs><radialGradient id="orb" cx="0.5" cy="0.35" r="0.65"><stop offset="0" stop-color="#8ec8f0"/><stop offset="0.5" stop-color="#1a6aa8"/><stop offset="0.85" stop-color="#0b4a86"/><stop offset="1" stop-color="#29b8f0"/></radialGradient><radialGradient id="oo" cx="0.45" cy="0.3" r="0.7"><stop offset="0" stop-color="#9cd0ff"/><stop offset="1" stop-color="#1a6ac0"/></radialGradient><radialGradient id="ff" cx="0.55" cy="0.35" r="0.6"><stop offset="0" stop-color="#4a90d0"/><stop offset="1" stop-color="#1a3a80"/></radialGradient></defs><circle cx="33" cy="26" r="21.5" fill="#dfe9f3" opacity="0.7"/><circle cx="33" cy="26" r="20.5" fill="url(#orb)" stroke="#0a3a6a" stroke-width="1"/><path d="M21.5,16.5 Q26,13 32.5,15 L30.5,24.5 Q25,22.5 19.5,25Z" fill="#f2602a"/><path d="M34,15.5 Q40,18 46.5,15 L44,25 Q38.5,27 32,25Z" fill="#86bc3c"/><path d="M19,27 Q24.5,24.5 30.5,26.5 L28.5,36 Q23,34 16.5,36.5Z" fill="#3a9ee8"/><path d="M32,27 Q37.5,29 43.5,26.5 L41,36.5 Q35.5,38.5 30,36Z" fill="#fdc01c"/><path d="M15,20 Q33,8 51,20 Q33,14 15,20Z" fill="#fff" opacity="0.35"/><path d="M86,21 Q83,37 91,41 Q98,45 110,43" stroke="#f4c048" stroke-width="2.5" fill="none"/><rect x="89" y="11" width="15" height="16" fill="#8ccc62" stroke="#fff" stroke-width="1.2"/><rect x="87" y="23" width="18" height="15" fill="#a8d8f4" stroke="#fff" stroke-width="1.2"/><rect x="105" y="28" width="16" height="11" fill="#a0d478" stroke="#fff" stroke-width="1.2"/><rect x="100" y="9" width="24" height="19" fill="#a8d4f8" stroke="#fff" stroke-width="1.4"/><path d="M104,25 L114.8,23.7 L114.8,26.3Z" fill="#f06008"/><path d="M104,25 L114.8,28.0 L113.1,30.4Z" fill="#f06008"/><path d="M104,25 L113.2,31.8 L110.1,33.7Z" fill="#f06008"/><path d="M104,25 L110.1,34.6 L106.1,35.6Z" fill="#f06008"/><path d="M104,25 L106.2,35.9 L101.8,35.9Z" fill="#f06008"/><path d="M104,25 L101.9,35.6 L97.9,34.6Z" fill="#f06008"/><path d="M104,25 L97.9,33.7 L94.8,31.8Z" fill="#f06008"/><path d="M104,25 L94.9,30.4 L93.2,28.0Z" fill="#f06008"/><path d="M104,25 L93.2,26.3 L93.2,23.7Z" fill="#f06008"/><path d="M104,25 L93.2,22.0 L94.9,19.6Z" fill="#f06008"/><path d="M104,25 L94.8,18.2 L97.9,16.3Z" fill="#f06008"/><path d="M104,25 L97.9,15.4 L101.9,14.4Z" fill="#f06008"/><path d="M104,25 L101.8,14.1 L106.2,14.1Z" fill="#f06008"/><path d="M104,25 L106.1,14.4 L110.1,15.4Z" fill="#f06008"/><path d="M104,25 L110.1,16.3 L113.2,18.2Z" fill="#f06008"/><path d="M104,25 L113.1,19.6 L114.8,22.0Z" fill="#f06008"/><circle cx="104" cy="25" r="5" fill="#f87a18"/><circle cx="104" cy="25" r="2.5" fill="#b89a20"/><path d="M171,8 Q174.5,5 178,8 L187,38 L162,38Z" fill="#f08010"/><path d="M168,18 L181,18 L183,25 L166,25Z" fill="#e8e8e8"/><path d="M165,29 L184,29 L186,35 L163,35Z" fill="#e0e0e0"/><path d="M158,38 L191,38 L189,44 L160,44Z" fill="#e87010"/><path d="M226,10 h12 l2,2 h22 v30 h-36z" fill="#e8c860"/><rect x="229" y="9" width="10" height="5" fill="#fff"/><rect x="236" y="12" width="10" height="5" fill="#fff"/><rect x="247" y="14" width="12" height="5" fill="#fff"/><rect x="230" y="9" width="2" height="3" fill="#2a9a2a"/><rect x="240" y="12" width="2" height="3" fill="#d02020"/><rect x="250" y="14" width="2" height="3" fill="#2060c0"/><path d="M226,17 h38 v27 h-38z" fill="#f4e090"/><path d="M231,30 Q231,28 234,28 H256 Q259,28 259,31 V44 H252 V38 H238 V44 H231Z" fill="#68b8e8"/><rect x="238" y="38" width="14" height="3" fill="#e8d070"/><rect x="297" y="7" width="36" height="35" fill="#b4d8f0"/><rect x="299.5" y="9.5" width="31" height="30" fill="#1a2630"/><path d="M305,15 V33 H313.5 M316.5,22 V33 M316.5,25.5 Q318.5,22 322.5,22" stroke="#b4d8f0" stroke-width="3" fill="none"/><g stroke="#f28c1a" stroke-linecap="round"><path d="M385.3,9.8 L397,17.5" stroke-width="4.6"/><path d="M371.5,17.3 L391,17.3" stroke-width="4.2"/><path d="M366.5,32.3 L382,21.5" stroke-width="5"/></g><circle cx="390.5" cy="26.8" r="12.6" fill="#f28c1a"/><circle cx="390.3" cy="26.5" r="8" fill="#fff"/><circle cx="390.3" cy="26.5" r="5.2" fill="#0b4a9c"/><circle cx="455" cy="25" r="18" fill="url(#oo)"/><path d="M440,32 Q450,25 456,30 Q462,25 468,27 Q460,27 456,33 Q450,28 440,32Z" fill="#fff"/><path d="M450,19 Q455,15 459,18 Q463,15 467,17 Q462,17 459,21 Q455,17 450,19Z" fill="#fff"/><ellipse cx="524" cy="39" rx="12" ry="3" fill="#6a86a8" opacity="0.35"/><path d="M513.3,15.2 Q515,23 520,24 Q531,24 536.2,13.1 Q539,30 532,38 Q524,44 517,40 Q511,36 512.5,28 Z" fill="#746a58" stroke="#3a342a" stroke-width="0.7"/><path d="M527,31 L540,38.5" stroke="#c86a10" stroke-width="2.2"/><path d="M539,38 L542.5,40" stroke="#eee" stroke-width="2.2"/><path d="M542,39.5 L546,42.5" stroke="#333" stroke-width="2.4" stroke-linecap="round"/><circle cx="516.8" cy="23.6" r="3.3" fill="#f0f0f0" stroke="#444" stroke-width="0.6"/><circle cx="523.8" cy="23.2" r="3.6" fill="#f0f0f0" stroke="#444" stroke-width="0.6"/><circle cx="517.3" cy="23.8" r="1.6" fill="#111"/><circle cx="524.5" cy="23.6" r="1.7" fill="#111"/><ellipse cx="510" cy="26.4" rx="4.3" ry="4.6" fill="#1a1a1a"/><circle cx="508.3" cy="24.8" r="1.5" fill="#fff" opacity="0.9"/><circle cx="594" cy="25" r="18.5" fill="#f07a18"/><circle cx="597" cy="22" r="13" fill="url(#ff)"/><path d="M577,18 Q574,34 586,42 Q600,48 609,38 Q615,30 612,20 Q608,34 595,36 Q584,36 583,26 Q585,18 590,14 Q582,14 577,18Z" fill="#e85a10"/><path d="M580,13 Q588,5 600,8 Q592,10 589,16Z" fill="#f8a020"/><path d="M606,10 Q613,16 612,24 Q608,16 603,13Z" fill="#f8b030"/><path d="M648,10 h28 l2,3 v30 h-28 l-2,-3z" fill="#8cc8f0" stroke="#d8ecf8" stroke-width="1"/><circle cx="660" cy="26" r="12" fill="#f07820"/><path d="M656,19 L667,26 L656,33Z" fill="#fff"/><path d="M735,25 L719.8,16.2 A17.5,17.5 0 0 1 750.2,16.2Z" fill="#db4437"/><path d="M735,25 L750.2,16.2 A17.5,17.5 0 0 1 735.0,42.5Z" fill="#f4c20d"/><path d="M735,25 L735.0,42.5 A17.5,17.5 0 0 1 719.8,16.2Z" fill="#0f9d58"/><circle cx="735" cy="25" r="8.2" fill="#fff"/><circle cx="735" cy="25" r="6.5" fill="#4a86d8"/><path d="M738,30 h10 v12 h-10z" fill="#111"/><rect x="740" y="33" width="6" height="2" fill="#d8b090"/><path d="M748,34 L752,30 L751,40Z" fill="#111"/><circle cx="803.5" cy="24" r="16" fill="#19a9ea"/><circle cx="793" cy="13" r="9" fill="#19a9ea"/><circle cx="814" cy="35" r="9" fill="#19a9ea"/><text x="803.5" y="33" font-family="Liberation Sans" font-size="26" font-weight="bold" fill="#fff" text-anchor="middle">S</text><circle cx="817" cy="38.5" r="7" fill="#f8a800" stroke="#fff" stroke-width="1.2"/><text x="817" y="42.5" font-family="Liberation Sans" font-size="10" font-weight="bold" fill="#111" text-anchor="middle">1</text><path d="M875,25 L859.8,16.2 A17.5,17.5 0 0 1 890.2,16.2Z" fill="#db4437"/><path d="M875,25 L890.2,16.2 A17.5,17.5 0 0 1 875.0,42.5Z" fill="#f4c20d"/><path d="M875,25 L875.0,42.5 A17.5,17.5 0 0 1 859.8,16.2Z" fill="#0f9d58"/><circle cx="875" cy="25" r="8.2" fill="#fff"/><circle cx="875" cy="25" r="6.5" fill="#4a86d8"/><path d="M882,32 Q882,27 886,27 Q890,27 890,32 L889,36 L892,44 H881 L884,36Z" fill="#fff"/><path d="M1103,29.5 L1108.5,23 L1114,29.5Z" fill="#fff" stroke="#3a4a60" stroke-width="0.6"/><path d="M1131,23 h4 l6,-5.5 v20 l-6,-5.5 h-4z" fill="#f4f4f4" stroke="#222" stroke-width="0.9"/><path d="M1144,22.5 Q1146.5,27.5 1144,32.5 M1147.5,19.5 Q1151.5,27.5 1147.5,35.5" stroke="#f4f4f4" stroke-width="1.5" fill="none"/><path d="M1162.5,17 V37" stroke="#222" stroke-width="3"/><path d="M1162.5,17 V37" stroke="#f4f4f4" stroke-width="1.6"/><path d="M1163.5,18 Q1168,15.5 1172,19 Q1176,21.5 1181,19.5 L1178,27 Q1173,29.5 1169,26.5 Q1166,24.5 1163.5,26Z" fill="#f4f4f4" stroke="#222" stroke-width="0.7"/><rect x="1192" y="19.5" width="11" height="16" rx="1.5" fill="#cfd8e0" stroke="#222" stroke-width="2.6"/><rect x="1192" y="19.5" width="11" height="16" rx="1.5" fill="none" stroke="#f4f4f4" stroke-width="1.4"/><rect x="1194.5" y="17" width="6" height="2.5" fill="#f4f4f4"/><path d="M1205,22 h5 v5 q0,3 -2.5,3 v7" stroke="#222" stroke-width="2.8" fill="none"/><path d="M1205,22 h5 v5 q0,3 -2.5,3 v7" stroke="#f4f4f4" stroke-width="1.6" fill="none"/><path d="M1206,18 v4 M1209,18 v4" stroke="#f4f4f4" stroke-width="1.2"/><g fill="#fff" stroke="#333" stroke-width="0.7"><rect x="1223.5" y="29.5" width="3" height="3.5"/><rect x="1227.5" y="26.5" width="3" height="6.5"/><rect x="1231.5" y="23.5" width="3" height="9.5"/><rect x="1235.5" y="20.5" width="3" height="12.5"/></g><text x="1300" y="22" font-family="Liberation Sans" font-size="14.5" fill="#f4f7fa" text-anchor="middle">23:13</text><text x="1300" y="44" font-family="Liberation Sans" font-size="14.5" fill="#f4f7fa" text-anchor="middle">02/01/2015</text><rect x="1352" y="3" width="14" height="47" fill="#7088a4" stroke="#52657c" stroke-width="1"/><rect x="1353" y="4" width="12" height="45" fill="none" stroke="#a0b4c8" stroke-width="0.8"/></svg>
</body></html>
